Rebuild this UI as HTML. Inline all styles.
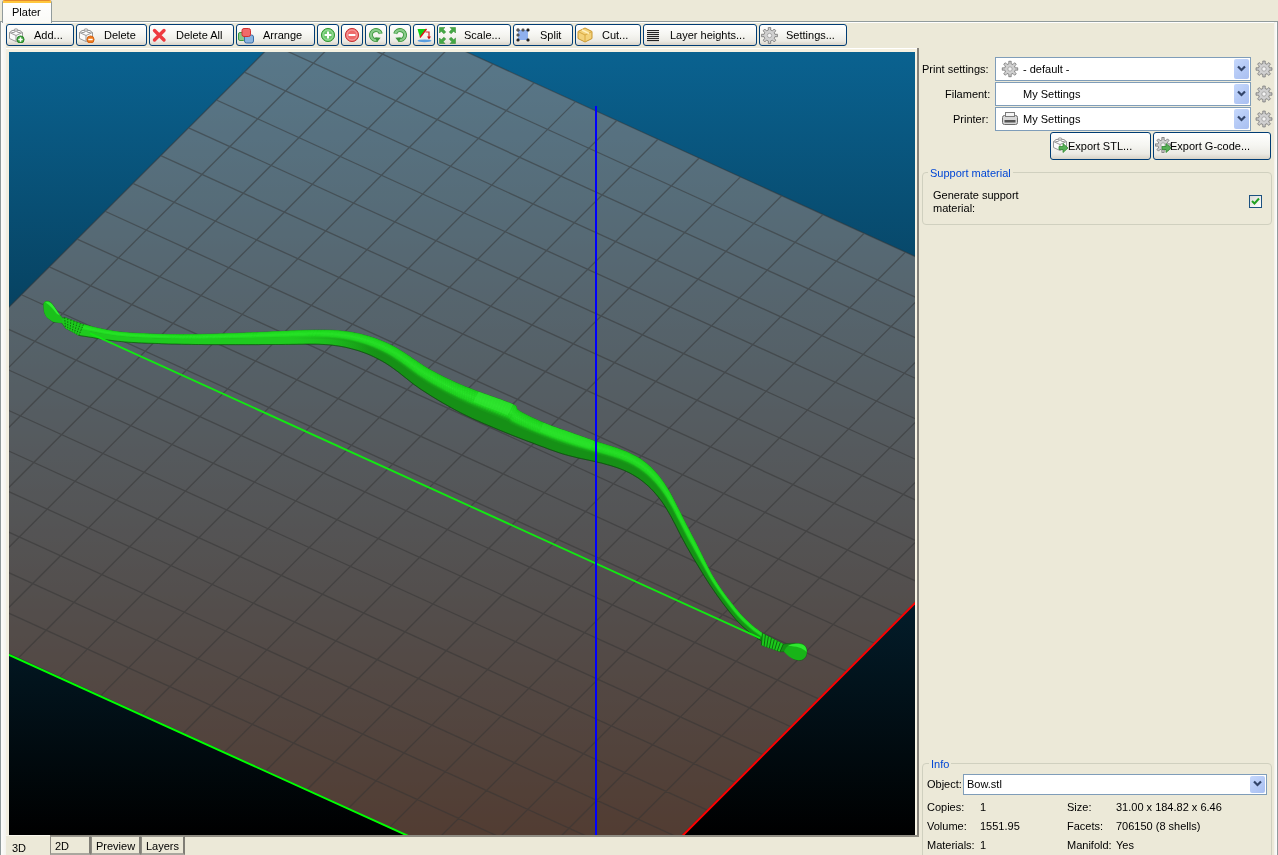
<!DOCTYPE html><html><head><meta charset="utf-8"><style>
*{box-sizing:border-box}
html,body{margin:0;padding:0}
body{width:1278px;height:855px;overflow:hidden;position:relative;background:#ECE9D8;font-family:"Liberation Sans",sans-serif;font-size:11px;color:#000}
.a{position:absolute}
.t{position:absolute;white-space:nowrap;line-height:1;will-change:transform}
.vp{position:absolute;left:9px;top:52px;display:block}
.btn{position:absolute;top:24px;height:22px;border:1px solid #003C74;border-radius:3px;background:linear-gradient(#FFFFFF 0%,#F6F6F2 45%,#ECEBE5 80%,#D8D3C8 100%)}
.btn svg{position:absolute}
.cmb{position:absolute;height:24px;border:1px solid #7F9DB9;background:#fff}
.dd{position:absolute;width:15px;border-radius:2px;background:linear-gradient(135deg,#C6D8FC,#B3C8F5 60%,#A9BFF1)}
.gb{position:absolute;border:1px solid #D0D0BF;border-radius:4px}
.gt{position:absolute;color:#0046D5;background:#ECE9D8;padding:0 2px;white-space:nowrap;line-height:1;will-change:transform}
.tab2{position:absolute;top:836px;height:19px;border:1px solid #8E8C83;border-top-color:#9A988F;border-right:2px solid #807E76;border-bottom:2px solid #A9A79E;background:#ECE9D8}
</style></head><body>
<div class="a" style="left:0;top:21px;width:1278px;height:1px;background:#919B9C"></div>
<div class="a" style="left:1px;top:22px;width:1276px;height:1px;background:#FFFFFF"></div>
<div class="a" style="left:0;top:21px;width:1px;height:834px;background:#919B9C"></div>
<div class="a" style="left:1px;top:22px;width:5px;height:833px;background:linear-gradient(90deg,#FDFDFB,#F4F3EE)"></div>
<div class="a" style="left:1277px;top:21px;width:1px;height:834px;background:#919B9C"></div>
<div class="a" style="left:1274px;top:22px;width:3px;height:833px;background:linear-gradient(90deg,#F1F0E8,#FFFFFF)"></div>
<div class="a" style="left:2px;top:0;width:50px;height:23px;background:linear-gradient(#FFFFFF,#FAFAF7);border-left:1px solid #919B9C;border-right:1px solid #919B9C;border-top:1px solid #E68B2C;border-radius:3px 3px 0 0"></div>
<div class="a" style="left:3px;top:1px;width:48px;height:2px;background:#FFC73C"></div>
<div class="t" style="left:12px;top:7px;">Plater</div>
<div class="a" style="left:6px;top:48px;width:912px;height:1px;background:#FFFFFF"></div>
<div class="a" style="left:6px;top:49px;width:911px;height:3px;background:#F5F1E1"></div>
<div class="a" style="left:6px;top:49px;width:3px;height:786px;background:#F1EEE0"></div>
<div class="a" style="left:915px;top:49px;width:2px;height:787px;background:#F8F4E4"></div>
<div class="a" style="left:917px;top:48px;width:2px;height:789px;background:#85827A"></div>
<div class="a" style="left:50px;top:835px;width:869px;height:2px;background:#8F8C82"></div>
<div class="a" style="left:6px;top:835px;width:44px;height:1px;background:#F8F6EC"></div>
<svg class="vp" width="906" height="783" viewBox="9 52 906 783">
<defs>
<linearGradient id="bg" x1="0" y1="52" x2="0" y2="835" gradientUnits="userSpaceOnUse">
<stop offset="0" stop-color="rgb(10,98,144)"/><stop offset="1" stop-color="rgb(0,0,0)"/>
</linearGradient>
</defs>
<rect x="9" y="52" width="906" height="783" fill="url(#bg)"/>
<polygon points="595.81,921.47 1152.93,365.05 327.88,-11.31 -229.24,545.11" fill="rgb(204,153,128)" fill-opacity="0.4"/>
<path d="M595.81 921.47L-229.24 545.11M595.81 921.47L1152.93 365.05M623.67 893.65L-201.39 517.29M554.56 902.65L1111.68 346.23M651.52 865.83L-173.53 489.47M513.30 883.83L1070.43 327.42M679.38 838.01L-145.67 461.65M472.05 865.02L1029.17 308.60M707.23 810.19L-117.82 433.83M430.80 846.20L987.92 289.78M735.09 782.37L-89.96 406.01M389.55 827.38L946.67 270.96M762.95 754.54L-62.11 378.19M348.29 808.56L905.42 252.14M790.80 726.72L-34.25 350.37M307.04 789.74L864.16 233.33M818.66 698.90L-6.39 322.54M265.79 770.93L822.91 214.51M846.51 671.08L21.46 294.72M224.54 752.11L781.66 195.69M874.37 643.26L49.32 266.90M183.28 733.29L740.41 176.87M902.23 615.44L77.18 239.08M142.03 714.47L699.15 158.06M930.08 587.62L105.03 211.26M100.78 695.66L657.90 139.24M957.94 559.80L132.89 183.44M59.53 676.84L616.65 120.42M985.80 531.98L160.74 155.62M18.27 658.02L575.40 101.60M1013.65 504.16L188.60 127.80M-22.98 639.20L534.14 82.78M1041.51 476.34L216.46 99.98M-64.23 620.38L492.89 63.97M1069.36 448.51L244.31 72.16M-105.48 601.57L451.64 45.15M1097.22 420.69L272.17 44.34M-146.74 582.75L410.39 26.33M1125.08 392.87L300.02 16.51M-187.99 563.93L369.13 7.51M1152.93 365.05L327.88 -11.31M-229.24 545.11L327.88 -11.31" stroke="rgb(51,51,51)" stroke-opacity="0.5" stroke-width="1.3" fill="none"/>
<line x1="596.77" y1="921.43" x2="1596.77" y2="-78.57" stroke="#ff0000" stroke-width="2"/>
<line x1="596.77" y1="921.43" x2="-903.23" y2="241.33" stroke="#00ff00" stroke-width="2"/>
<g>
<defs><linearGradient id="dk" gradientUnits="userSpaceOnUse" x1="280" y1="0" x2="380" y2="0"><stop offset="0" stop-color="#1DC41D"/><stop offset="1" stop-color="#169016"/></linearGradient></defs>
<polygon points="43.6,307.0 43.6,303.3 45.5,301.4 49.0,301.2 52.0,303.5 56.0,309.5 60.0,315.5 62.5,318.0 64.7,317.4 83.5,324.4 93.2,327.0 94.9,327.4 96.5,327.8 98.2,328.2 99.8,328.5 103.1,329.2 106.4,329.9 109.7,330.5 113.0,331.0 116.3,331.5 119.7,331.9 123.0,332.3 126.4,332.6 129.7,332.9 133.1,333.1 136.4,333.3 139.8,333.4 143.2,333.6 146.5,333.7 149.9,333.9 153.2,334.0 156.6,334.1 160.0,334.2 163.3,334.3 166.7,334.4 170.1,334.5 173.4,334.5 176.8,334.6 180.2,334.6 183.5,334.6 186.9,334.6 190.3,334.5 193.6,334.5 197.0,334.4 200.4,334.4 203.7,334.3 207.1,334.2 210.5,334.1 213.8,334.0 217.2,333.9 220.6,333.8 223.9,333.7 227.3,333.6 230.6,333.5 234.0,333.4 237.4,333.2 240.7,333.1 244.1,333.0 247.5,332.8 250.8,332.7 254.2,332.6 257.6,332.4 260.9,332.3 264.3,332.1 267.6,332.0 271.0,331.8 274.4,331.6 277.7,331.5 281.1,331.3 284.5,331.1 287.8,331.0 291.2,330.8 294.5,330.7 297.9,330.5 301.3,330.4 304.6,330.3 308.0,330.2 311.4,330.1 314.7,330.0 318.1,330.0 321.5,330.0 324.8,330.0 328.2,330.1 331.5,330.2 334.9,330.4 338.3,330.6 341.6,331.0 344.9,331.4 348.3,331.8 351.6,332.3 354.9,332.9 358.2,333.6 361.5,334.3 364.7,335.2 367.9,336.1 371.1,337.1 374.3,338.1 377.5,339.3 380.6,340.5 383.7,341.7 386.8,343.1 389.8,344.5 392.8,346.0 395.7,347.6 398.6,349.3 401.4,351.1 404.3,352.8 407.1,354.7 409.9,356.5 412.6,358.4 415.4,360.3 418.2,362.2 421.0,364.1 423.8,365.9 426.6,367.7 429.5,369.4 432.5,371.0 435.4,372.6 438.4,374.2 441.4,375.7 444.4,377.2 447.5,378.7 450.5,380.1 453.5,381.5 456.6,382.9 459.7,384.3 462.8,385.6 465.9,386.9 469.0,388.1 472.2,389.3 475.3,390.5 478.5,391.7 481.6,392.8 484.8,393.9 488.0,395.0 491.1,396.2 494.3,397.3 497.5,398.4 500.7,399.5 503.8,400.7 507.0,401.9 510.1,403.1 513.2,404.5 516.1,406.1 516.8,409.0 519.5,411.0 522.4,412.7 525.4,414.3 528.4,415.8 531.4,417.3 534.5,418.7 537.5,420.1 540.6,421.5 543.7,422.7 546.8,424.0 549.9,425.2 553.0,426.4 556.2,427.6 559.3,428.7 562.5,429.8 565.7,430.8 568.9,431.9 572.1,433.1 575.2,434.2 578.4,435.3 581.6,436.5 584.7,437.6 587.9,438.7 591.1,439.8 594.3,440.9 597.5,441.9 600.7,443.0 603.9,444.0 607.1,445.0 610.3,446.0 613.5,447.1 616.7,448.1 619.9,449.2 623.0,450.4 626.1,451.6 629.2,452.9 632.2,454.4 635.2,455.9 638.1,457.6 640.9,459.3 643.6,461.2 646.3,463.2 648.8,465.4 651.3,467.6 653.6,470.0 655.9,472.5 658.1,475.0 660.1,477.6 662.1,480.3 664.1,483.1 665.9,485.9 667.7,488.7 669.4,491.6 671.0,494.5 672.6,497.5 674.1,500.5 675.6,503.5 677.1,506.5 678.7,509.5 680.2,512.5 681.7,515.5 683.2,518.5 684.7,521.5 686.2,524.5 687.8,527.5 689.4,530.5 690.9,533.4 692.5,536.4 694.1,539.4 695.6,542.4 697.1,545.4 698.6,548.4 700.1,551.4 701.6,554.4 703.1,557.5 704.6,560.5 706.0,563.5 707.5,566.5 709.1,569.5 710.6,572.5 712.3,575.4 714.0,578.3 715.7,581.1 717.5,583.9 719.4,586.7 721.3,589.5 723.2,592.3 725.2,595.0 727.2,597.7 729.3,600.3 731.3,603.0 733.4,605.6 735.5,608.2 737.6,610.8 739.8,613.4 742.1,615.8 744.4,618.2 746.8,620.5 749.3,622.8 750.5,624.0 751.7,625.1 753.0,626.2 754.3,627.3 762.4,633.3 762.4,633.3 783.3,644.1 788.8,643.5 795.0,643.2 802.5,644.1 805.8,646.8 806.9,650.7 806.0,656.5 803.0,659.8 799.8,660.5 794.3,659.4 788.8,655.6 784.4,651.8 780.0,651.8 761.4,645.2 761.4,640.8 753.0,635.3 751.7,634.3 750.4,633.2 749.1,632.2 747.9,631.1 745.4,628.9 742.9,626.7 740.5,624.4 738.2,622.0 735.9,619.6 733.8,617.1 731.6,614.5 729.5,611.9 727.5,609.3 725.4,606.6 723.4,604.0 721.4,601.3 719.5,598.6 717.5,595.9 715.6,593.2 713.7,590.4 711.8,587.7 709.9,584.9 708.1,582.1 706.3,579.3 704.5,576.5 702.8,573.6 701.0,570.8 699.3,567.9 697.6,565.1 695.8,562.2 694.1,559.3 692.4,556.5 690.7,553.6 689.1,550.7 687.4,547.8 685.8,544.9 684.2,541.9 682.6,539.0 681.0,536.0 679.5,533.1 678.0,530.1 676.5,527.1 675.0,524.1 673.4,521.2 671.9,518.2 670.3,515.3 668.6,512.4 666.9,509.5 665.2,506.7 663.4,503.9 661.5,501.2 659.5,498.5 657.4,495.9 655.3,493.4 653.1,490.9 650.8,488.5 648.4,486.2 645.9,484.0 643.4,481.9 640.7,479.8 638.0,477.9 635.2,476.2 632.4,474.5 629.5,472.9 626.5,471.5 623.4,470.1 620.4,468.9 617.2,467.7 614.1,466.7 610.9,465.7 607.7,464.8 604.5,463.9 601.3,463.0 598.0,462.3 594.8,461.5 591.5,460.8 588.2,460.1 585.0,459.4 581.7,458.7 578.4,458.0 575.2,457.2 572.0,456.4 568.7,455.6 565.5,454.7 562.3,453.8 559.2,452.8 556.0,451.7 552.9,450.6 549.7,449.5 546.6,448.3 543.5,447.1 540.3,446.0 537.2,444.8 534.1,443.6 531.0,442.4 527.8,441.3 524.7,440.1 521.6,438.9 518.5,437.7 515.4,436.5 512.2,435.3 509.1,434.0 506.0,432.8 502.9,431.5 499.8,430.3 496.8,429.0 493.7,427.7 490.6,426.4 487.5,425.1 484.4,423.8 481.4,422.5 478.3,421.1 475.3,419.8 472.2,418.4 469.2,417.0 466.2,415.5 463.2,414.1 460.2,412.6 457.3,411.0 454.3,409.4 451.4,407.8 448.5,406.2 445.6,404.5 442.7,402.9 439.8,401.2 437.0,399.5 434.1,397.7 431.2,396.0 428.4,394.2 425.6,392.4 422.8,390.6 420.0,388.8 417.3,386.8 414.6,384.9 411.9,382.9 409.3,380.8 406.7,378.7 404.1,376.7 401.5,374.6 398.9,372.5 396.2,370.5 393.6,368.6 390.8,366.6 388.1,364.8 385.3,363.0 382.4,361.3 379.5,359.7 376.6,358.2 373.6,356.7 370.5,355.3 367.5,354.0 364.4,352.8 361.3,351.7 358.1,350.6 354.9,349.7 351.7,348.8 348.5,348.0 345.2,347.2 341.9,346.6 338.7,346.0 335.4,345.6 332.1,345.1 328.7,344.8 325.4,344.6 322.1,344.4 318.8,344.2 315.4,344.1 312.1,344.1 308.8,344.1 305.4,344.1 302.1,344.2 298.7,344.2 295.4,344.3 292.1,344.3 288.7,344.4 285.4,344.4 282.0,344.5 278.7,344.5 275.3,344.5 272.0,344.5 268.7,344.5 265.3,344.5 262.0,344.5 258.6,344.6 255.3,344.6 252.0,344.6 248.6,344.6 245.3,344.6 241.9,344.6 238.6,344.6 235.3,344.6 231.9,344.6 228.6,344.6 225.2,344.6 221.9,344.6 218.6,344.6 215.2,344.6 211.9,344.6 208.5,344.6 205.2,344.6 201.9,344.5 198.5,344.5 195.2,344.5 191.8,344.4 188.5,344.3 185.1,344.3 181.8,344.2 178.5,344.1 175.1,344.0 171.8,344.0 168.5,343.9 165.1,343.8 161.8,343.7 158.4,343.5 155.1,343.4 151.8,343.3 148.4,343.2 145.1,343.1 141.7,342.9 138.4,342.8 135.1,342.6 131.7,342.4 128.4,342.2 125.1,341.9 121.8,341.6 118.4,341.3 115.1,340.9 111.8,340.5 108.5,340.0 105.2,339.6 101.9,339.1 98.6,338.5 95.3,338.0 93.7,337.7 92.0,337.4 90.4,337.2 88.7,336.9 78.8,335.4 65.5,328.3 61.6,322.9 53.0,322.1 47.0,317.5 44.5,313.0" fill="url(#dk)" stroke="#0B4A0B" stroke-width="0.7" stroke-opacity="0.55"/>
<polygon points="83.5,324.4 93.2,327.0 94.9,327.4 96.5,327.8 98.2,328.2 99.8,328.5 103.1,329.2 106.4,329.9 109.7,330.5 113.0,331.0 116.3,331.5 119.7,331.9 123.0,332.3 126.4,332.6 129.7,332.9 133.1,333.1 136.4,333.3 139.8,333.4 143.2,333.6 146.5,333.7 149.9,333.9 153.2,334.0 156.6,334.1 160.0,334.2 163.3,334.3 166.7,334.4 170.1,334.5 173.4,334.5 176.8,334.6 180.2,334.6 183.5,334.6 186.9,334.6 190.3,334.5 193.6,334.5 197.0,334.4 200.4,334.4 203.7,334.3 207.1,334.2 210.5,334.1 213.8,334.0 217.2,333.9 220.6,333.8 223.9,333.7 227.3,333.6 230.6,333.5 234.0,333.4 237.4,333.2 240.7,333.1 244.1,333.0 247.5,332.8 250.8,332.7 254.2,332.6 257.6,332.4 260.9,332.3 264.3,332.1 267.6,332.0 271.0,331.8 274.4,331.6 277.7,331.5 281.1,331.3 284.5,331.1 287.8,331.0 291.2,330.8 294.5,330.7 297.9,330.5 301.3,330.4 304.6,330.3 308.0,330.2 311.4,330.1 314.7,330.0 318.1,330.0 321.5,330.0 324.8,330.0 328.2,330.1 331.5,330.2 334.9,330.4 338.3,330.6 341.6,331.0 344.9,331.4 348.3,331.8 351.6,332.3 354.9,332.9 358.2,333.6 361.5,334.3 364.7,335.2 367.9,336.1 371.1,337.1 374.3,338.1 377.5,339.3 380.6,340.5 383.7,341.7 386.8,343.1 389.8,344.5 392.8,346.0 395.7,347.6 398.6,349.3 401.4,351.1 404.3,352.8 407.1,354.7 409.9,356.5 412.6,358.4 415.4,360.3 418.2,362.2 421.0,364.1 423.8,365.9 426.6,367.7 429.5,369.4 432.5,371.0 435.4,372.6 438.4,374.2 441.4,375.7 444.4,377.2 447.5,378.7 450.5,380.1 453.5,381.5 456.6,382.9 459.7,384.3 462.8,385.6 465.9,386.9 469.0,388.1 472.2,389.3 475.3,390.5 478.5,391.7 481.6,392.8 484.8,393.9 488.0,395.0 491.1,396.2 494.3,397.3 497.5,398.4 500.7,399.5 503.8,400.7 507.0,401.9 510.1,403.1 513.2,404.5 516.1,406.1 516.8,409.0 519.5,411.0 522.4,412.7 525.4,414.3 528.4,415.8 531.4,417.3 534.5,418.7 537.5,420.1 540.6,421.5 543.7,422.7 546.8,424.0 549.9,425.2 553.0,426.4 556.2,427.6 559.3,428.7 562.5,429.8 565.7,430.8 568.9,431.9 572.1,433.1 575.2,434.2 578.4,435.3 581.6,436.5 584.7,437.6 587.9,438.7 591.1,439.8 594.3,440.9 597.5,441.9 600.7,443.0 603.9,444.0 607.1,445.0 610.3,446.0 613.5,447.1 616.7,448.1 619.9,449.2 623.0,450.4 626.1,451.6 629.2,452.9 632.2,454.4 635.2,455.9 638.1,457.6 640.9,459.3 643.6,461.2 646.3,463.2 648.8,465.4 651.3,467.6 653.6,470.0 655.9,472.5 658.1,475.0 660.1,477.6 662.1,480.3 664.1,483.1 665.9,485.9 667.7,488.7 669.4,491.6 671.0,494.5 672.6,497.5 674.1,500.5 675.6,503.5 677.1,506.5 678.7,509.5 680.2,512.5 681.7,515.5 683.2,518.5 684.7,521.5 686.2,524.5 687.8,527.5 689.4,530.5 690.9,533.4 692.5,536.4 694.1,539.4 695.6,542.4 697.1,545.4 698.6,548.4 700.1,551.4 701.6,554.4 703.1,557.5 704.6,560.5 706.0,563.5 707.5,566.5 709.1,569.5 710.6,572.5 712.3,575.4 714.0,578.3 715.7,581.1 717.5,583.9 719.4,586.7 721.3,589.5 723.2,592.3 725.2,595.0 727.2,597.7 729.3,600.3 731.3,603.0 733.4,605.6 735.5,608.2 737.6,610.8 739.8,613.4 742.1,615.8 744.4,618.2 746.8,620.5 749.3,622.8 750.5,624.0 751.7,625.1 753.0,626.2 754.3,627.3 762.4,633.3 762.4,633.6 754.2,627.6 752.9,626.5 751.7,625.4 750.4,624.3 749.2,623.1 746.8,620.9 744.4,618.5 742.0,616.2 739.7,613.7 737.6,611.2 735.4,608.6 733.3,605.9 731.3,603.3 729.2,600.6 727.1,598.0 725.1,595.3 723.1,592.6 721.2,589.9 719.3,587.1 717.5,584.3 715.7,581.5 713.9,578.6 712.2,575.8 710.5,572.9 709.0,569.9 707.4,566.9 705.9,563.9 704.4,560.9 702.9,557.9 701.4,554.8 699.9,551.8 698.4,548.8 696.9,545.8 695.4,542.8 693.9,539.8 692.3,536.8 690.7,533.9 689.2,530.9 687.6,527.9 686.0,524.9 684.5,521.9 683.0,518.9 681.5,515.9 680.0,512.9 678.5,509.9 676.9,506.9 675.4,503.9 673.9,500.9 672.4,498.0 670.8,495.0 669.2,492.1 667.5,489.2 665.7,486.3 663.8,483.5 661.9,480.8 659.9,478.1 657.8,475.5 655.6,473.0 653.4,470.5 651.0,468.2 648.5,465.9 646.0,463.8 643.3,461.8 640.6,459.9 637.7,458.1 634.9,456.5 631.9,455.0 628.9,453.5 625.8,452.2 622.7,451.0 619.5,449.9 616.4,448.8 613.2,447.7 610.0,446.7 606.8,445.7 603.6,444.6 600.3,443.6 597.1,442.6 593.9,441.6 590.7,440.5 587.6,439.4 584.4,438.3 581.2,437.2 578.0,436.1 574.9,435.0 571.7,433.8 568.5,432.7 565.3,431.6 562.2,430.6 559.0,429.5 555.8,428.4 552.7,427.2 549.5,426.0 546.4,424.8 543.3,423.5 540.2,422.2 537.1,420.9 534.1,419.5 531.0,418.1 528.0,416.6 525.0,415.1 522.0,413.6 519.1,411.9 516.4,409.9 515.6,407.0 512.7,405.4 509.6,404.1 506.5,402.9 503.3,401.6 500.2,400.4 497.0,399.4 493.8,398.2 490.7,397.1 487.5,396.0 484.3,394.8 481.2,393.7 478.0,392.6 474.8,391.4 471.7,390.2 468.6,389.0 465.5,387.7 462.4,386.4 459.3,385.1 456.2,383.7 453.1,382.3 450.1,380.9 447.1,379.4 444.0,377.9 441.0,376.4 438.0,374.9 435.1,373.3 432.1,371.7 429.2,370.1 426.3,368.4 423.4,366.6 420.6,364.8 417.8,362.9 415.1,361.0 412.3,359.1 409.5,357.2 406.8,355.3 404.0,353.5 401.1,351.7 398.3,350.0 395.4,348.3 392.5,346.7 389.5,345.1 386.5,343.7 383.5,342.3 380.3,341.1 377.2,339.9 374.1,338.7 370.9,337.7 367.7,336.7 364.5,335.8 361.2,334.9 357.9,334.2 354.6,333.5 351.3,332.9 348.0,332.4 344.7,331.9 341.4,331.5 338.0,331.2 334.7,330.9 331.3,330.7 328.0,330.6 324.6,330.5 321.2,330.5 317.9,330.5 314.5,330.5 311.1,330.6 307.8,330.7 304.4,330.8 301.1,330.9 297.7,331.0 294.3,331.2 291.0,331.3 287.6,331.5 284.2,331.6 280.9,331.8 277.5,331.9 274.2,332.1 270.8,332.3 267.4,332.4 264.1,332.6 260.7,332.7 257.3,332.9 254.0,333.0 250.6,333.2 247.3,333.3 243.9,333.4 240.5,333.5 237.2,333.7 233.8,333.8 230.4,333.9 227.1,334.0 223.7,334.1 220.4,334.2 217.0,334.3 213.6,334.4 210.3,334.5 206.9,334.6 203.5,334.7 200.2,334.8 196.8,334.8 193.4,334.9 190.1,334.9 186.7,334.9 183.3,335.0 180.0,335.0 176.6,334.9 173.2,334.9 169.9,334.8 166.5,334.8 163.2,334.7 159.8,334.6 156.4,334.5 153.1,334.3 149.7,334.2 146.3,334.1 143.0,333.9 139.6,333.8 136.3,333.6 132.9,333.4 129.5,333.2 126.2,332.9 122.8,332.6 119.5,332.3 116.2,331.8 112.8,331.4 109.5,330.8 106.2,330.2 102.9,329.6 99.6,328.9 98.0,328.5 96.4,328.2 94.7,327.8 93.1,327.4 83.3,324.8" fill="#1DCC1D" stroke="#1DCC1D" stroke-width="0.35"/>
<polygon points="83.3,324.8 93.1,327.4 94.7,327.8 96.4,328.2 98.0,328.5 99.6,328.9 102.9,329.6 106.2,330.2 109.5,330.8 112.8,331.4 116.2,331.8 119.5,332.3 122.8,332.6 126.2,332.9 129.5,333.2 132.9,333.4 136.3,333.6 139.6,333.8 143.0,333.9 146.3,334.1 149.7,334.2 153.1,334.3 156.4,334.5 159.8,334.6 163.2,334.7 166.5,334.8 169.9,334.8 173.2,334.9 176.6,334.9 180.0,335.0 183.3,335.0 186.7,334.9 190.1,334.9 193.4,334.9 196.8,334.8 200.2,334.8 203.5,334.7 206.9,334.6 210.3,334.5 213.6,334.4 217.0,334.3 220.4,334.2 223.7,334.1 227.1,334.0 230.4,333.9 233.8,333.8 237.2,333.7 240.5,333.5 243.9,333.4 247.3,333.3 250.6,333.2 254.0,333.0 257.3,332.9 260.7,332.7 264.1,332.6 267.4,332.4 270.8,332.3 274.2,332.1 277.5,331.9 280.9,331.8 284.2,331.6 287.6,331.5 291.0,331.3 294.3,331.2 297.7,331.0 301.1,330.9 304.4,330.8 307.8,330.7 311.1,330.6 314.5,330.5 317.9,330.5 321.2,330.5 324.6,330.5 328.0,330.6 331.3,330.7 334.7,330.9 338.0,331.2 341.4,331.5 344.7,331.9 348.0,332.4 351.3,332.9 354.6,333.5 357.9,334.2 361.2,334.9 364.5,335.8 367.7,336.7 370.9,337.7 374.1,338.7 377.2,339.9 380.3,341.1 383.5,342.3 386.5,343.7 389.5,345.1 392.5,346.7 395.4,348.3 398.3,350.0 401.1,351.7 404.0,353.5 406.8,355.3 409.5,357.2 412.3,359.1 415.1,361.0 417.8,362.9 420.6,364.8 423.4,366.6 426.3,368.4 429.2,370.1 432.1,371.7 435.1,373.3 438.0,374.9 441.0,376.4 444.0,377.9 447.1,379.4 450.1,380.9 453.1,382.3 456.2,383.7 459.3,385.1 462.4,386.4 465.5,387.7 468.6,389.0 471.7,390.2 474.8,391.4 478.0,392.6 481.2,393.7 484.3,394.8 487.5,396.0 490.7,397.1 493.8,398.2 497.0,399.4 500.2,400.4 503.3,401.6 506.5,402.9 509.6,404.1 512.7,405.4 515.6,407.0 516.4,409.9 519.1,411.9 522.0,413.6 525.0,415.1 528.0,416.6 531.0,418.1 534.1,419.5 537.1,420.9 540.2,422.2 543.3,423.5 546.4,424.8 549.5,426.0 552.7,427.2 555.8,428.4 559.0,429.5 562.2,430.6 565.3,431.6 568.5,432.7 571.7,433.8 574.9,435.0 578.0,436.1 581.2,437.2 584.4,438.3 587.6,439.4 590.7,440.5 593.9,441.6 597.1,442.6 600.3,443.6 603.6,444.6 606.8,445.7 610.0,446.7 613.2,447.7 616.4,448.8 619.5,449.9 622.7,451.0 625.8,452.2 628.9,453.5 631.9,455.0 634.9,456.5 637.7,458.1 640.6,459.9 643.3,461.8 646.0,463.8 648.5,465.9 651.0,468.2 653.4,470.5 655.6,473.0 657.8,475.5 659.9,478.1 661.9,480.8 663.8,483.5 665.7,486.3 667.5,489.2 669.2,492.1 670.8,495.0 672.4,498.0 673.9,500.9 675.4,503.9 676.9,506.9 678.5,509.9 680.0,512.9 681.5,515.9 683.0,518.9 684.5,521.9 686.0,524.9 687.6,527.9 689.2,530.9 690.7,533.9 692.3,536.8 693.9,539.8 695.4,542.8 696.9,545.8 698.4,548.8 699.9,551.8 701.4,554.8 702.9,557.9 704.4,560.9 705.9,563.9 707.4,566.9 709.0,569.9 710.5,572.9 712.2,575.8 713.9,578.6 715.7,581.5 717.5,584.3 719.3,587.1 721.2,589.9 723.1,592.6 725.1,595.3 727.1,598.0 729.2,600.6 731.3,603.3 733.3,605.9 735.4,608.6 737.6,611.2 739.7,613.7 742.0,616.2 744.4,618.5 746.8,620.9 749.2,623.1 750.4,624.3 751.7,625.4 752.9,626.5 754.2,627.6 762.4,633.6 762.3,633.9 754.2,627.9 752.9,626.8 751.6,625.7 750.4,624.6 749.2,623.4 746.7,621.2 744.3,618.9 742.0,616.5 739.7,614.0 737.5,611.5 735.4,608.9 733.3,606.3 731.2,603.6 729.1,601.0 727.1,598.3 725.0,595.6 723.1,592.9 721.1,590.2 719.2,587.4 717.4,584.6 715.6,581.8 713.8,579.0 712.1,576.1 710.4,573.2 708.8,570.3 707.3,567.3 705.8,564.3 704.3,561.3 702.8,558.2 701.3,555.2 699.8,552.2 698.3,549.2 696.8,546.2 695.2,543.2 693.7,540.2 692.1,537.3 690.5,534.3 689.0,531.3 687.4,528.4 685.9,525.4 684.3,522.4 682.8,519.4 681.3,516.4 679.8,513.4 678.3,510.4 676.7,507.4 675.2,504.4 673.7,501.4 672.2,498.4 670.6,495.4 668.9,492.5 667.2,489.6 665.4,486.8 663.6,484.0 661.6,481.3 659.6,478.6 657.5,476.0 655.3,473.5 653.1,471.0 650.7,468.7 648.2,466.5 645.7,464.3 643.0,462.3 640.3,460.5 637.4,458.7 634.5,457.1 631.6,455.5 628.6,454.1 625.5,452.8 622.4,451.6 619.2,450.5 616.0,449.4 612.8,448.3 609.6,447.3 606.4,446.3 603.2,445.3 600.0,444.3 596.8,443.3 593.6,442.3 590.4,441.2 587.2,440.1 584.0,439.1 580.8,438.0 577.7,436.8 574.5,435.7 571.3,434.6 568.2,433.5 565.0,432.4 561.8,431.3 558.6,430.3 555.4,429.1 552.3,428.0 549.2,426.8 546.0,425.6 542.9,424.3 539.8,423.0 536.8,421.7 533.7,420.3 530.7,418.9 527.7,417.4 524.6,415.9 521.6,414.4 518.7,412.8 516.0,410.8 515.2,408.0 512.2,406.4 509.1,405.1 506.0,403.8 502.8,402.6 499.7,401.4 496.5,400.3 493.3,399.2 490.2,398.0 487.0,396.9 483.9,395.8 480.7,394.6 477.5,393.5 474.4,392.3 471.3,391.1 468.1,389.8 465.0,388.6 461.9,387.2 458.8,385.9 455.8,384.5 452.7,383.1 449.7,381.7 446.7,380.2 443.7,378.7 440.7,377.2 437.7,375.7 434.7,374.1 431.8,372.5 428.8,370.8 425.9,369.1 423.1,367.3 420.3,365.5 417.5,363.6 414.7,361.7 412.0,359.8 409.2,357.9 406.5,356.0 403.7,354.2 400.9,352.4 398.0,350.6 395.1,348.9 392.2,347.3 389.3,345.8 386.2,344.3 383.2,343.0 380.1,341.7 377.0,340.5 373.8,339.3 370.6,338.3 367.4,337.3 364.2,336.3 361.0,335.5 357.7,334.7 354.4,334.1 351.1,333.5 347.8,332.9 344.5,332.5 341.1,332.1 337.8,331.7 334.4,331.5 331.1,331.3 327.7,331.1 324.4,331.1 321.0,331.0 317.7,331.0 314.3,331.1 310.9,331.1 307.6,331.2 304.2,331.3 300.8,331.4 297.5,331.6 294.1,331.7 290.8,331.8 287.4,332.0 284.0,332.1 280.7,332.3 277.3,332.4 273.9,332.6 270.6,332.7 267.2,332.9 263.9,333.1 260.5,333.2 257.1,333.3 253.8,333.5 250.4,333.6 247.1,333.7 243.7,333.9 240.3,334.0 237.0,334.1 233.6,334.2 230.2,334.3 226.9,334.4 223.5,334.5 220.2,334.6 216.8,334.7 213.4,334.8 210.1,334.9 206.7,335.0 203.3,335.1 200.0,335.1 196.6,335.2 193.2,335.2 189.9,335.3 186.5,335.3 183.2,335.3 179.8,335.3 176.4,335.3 173.1,335.2 169.7,335.2 166.3,335.1 163.0,335.0 159.6,334.9 156.2,334.8 152.9,334.7 149.5,334.6 146.2,334.4 142.8,334.3 139.4,334.1 136.1,334.0 132.7,333.8 129.4,333.6 126.0,333.3 122.7,333.0 119.3,332.6 116.0,332.2 112.7,331.7 109.4,331.2 106.1,330.6 102.8,329.9 99.5,329.2 97.8,328.9 96.2,328.5 94.5,328.1 92.9,327.8 83.1,325.2" fill="#1FD31F" stroke="#1FD31F" stroke-width="0.35"/>
<polygon points="83.1,325.2 92.9,327.8 94.5,328.1 96.2,328.5 97.8,328.9 99.5,329.2 102.8,329.9 106.1,330.6 109.4,331.2 112.7,331.7 116.0,332.2 119.3,332.6 122.7,333.0 126.0,333.3 129.4,333.6 132.7,333.8 136.1,334.0 139.4,334.1 142.8,334.3 146.2,334.4 149.5,334.6 152.9,334.7 156.2,334.8 159.6,334.9 163.0,335.0 166.3,335.1 169.7,335.2 173.1,335.2 176.4,335.3 179.8,335.3 183.2,335.3 186.5,335.3 189.9,335.3 193.2,335.2 196.6,335.2 200.0,335.1 203.3,335.1 206.7,335.0 210.1,334.9 213.4,334.8 216.8,334.7 220.2,334.6 223.5,334.5 226.9,334.4 230.2,334.3 233.6,334.2 237.0,334.1 240.3,334.0 243.7,333.9 247.1,333.7 250.4,333.6 253.8,333.5 257.1,333.3 260.5,333.2 263.9,333.1 267.2,332.9 270.6,332.7 273.9,332.6 277.3,332.4 280.7,332.3 284.0,332.1 287.4,332.0 290.8,331.8 294.1,331.7 297.5,331.6 300.8,331.4 304.2,331.3 307.6,331.2 310.9,331.1 314.3,331.1 317.7,331.0 321.0,331.0 324.4,331.1 327.7,331.1 331.1,331.3 334.4,331.5 337.8,331.7 341.1,332.1 344.5,332.5 347.8,332.9 351.1,333.5 354.4,334.1 357.7,334.7 361.0,335.5 364.2,336.3 367.4,337.3 370.6,338.3 373.8,339.3 377.0,340.5 380.1,341.7 383.2,343.0 386.2,344.3 389.3,345.8 392.2,347.3 395.1,348.9 398.0,350.6 400.9,352.4 403.7,354.2 406.5,356.0 409.2,357.9 412.0,359.8 414.7,361.7 417.5,363.6 420.3,365.5 423.1,367.3 425.9,369.1 428.8,370.8 431.8,372.5 434.7,374.1 437.7,375.7 440.7,377.2 443.7,378.7 446.7,380.2 449.7,381.7 452.7,383.1 455.8,384.5 458.8,385.9 461.9,387.2 465.0,388.6 468.1,389.8 471.3,391.1 474.4,392.3 477.5,393.5 480.7,394.6 483.9,395.8 487.0,396.9 490.2,398.0 493.3,399.2 496.5,400.3 499.7,401.4 502.8,402.6 506.0,403.8 509.1,405.1 512.2,406.4 515.2,408.0 516.0,410.8 518.7,412.8 521.6,414.4 524.6,415.9 527.7,417.4 530.7,418.9 533.7,420.3 536.8,421.7 539.8,423.0 542.9,424.3 546.0,425.6 549.2,426.8 552.3,428.0 555.4,429.1 558.6,430.3 561.8,431.3 565.0,432.4 568.2,433.5 571.3,434.6 574.5,435.7 577.7,436.8 580.8,438.0 584.0,439.1 587.2,440.1 590.4,441.2 593.6,442.3 596.8,443.3 600.0,444.3 603.2,445.3 606.4,446.3 609.6,447.3 612.8,448.3 616.0,449.4 619.2,450.5 622.4,451.6 625.5,452.8 628.6,454.1 631.6,455.5 634.5,457.1 637.4,458.7 640.3,460.5 643.0,462.3 645.7,464.3 648.2,466.5 650.7,468.7 653.1,471.0 655.3,473.5 657.5,476.0 659.6,478.6 661.6,481.3 663.6,484.0 665.4,486.8 667.2,489.6 668.9,492.5 670.6,495.4 672.2,498.4 673.7,501.4 675.2,504.4 676.7,507.4 678.3,510.4 679.8,513.4 681.3,516.4 682.8,519.4 684.3,522.4 685.9,525.4 687.4,528.4 689.0,531.3 690.5,534.3 692.1,537.3 693.7,540.2 695.2,543.2 696.8,546.2 698.3,549.2 699.8,552.2 701.3,555.2 702.8,558.2 704.3,561.3 705.8,564.3 707.3,567.3 708.8,570.3 710.4,573.2 712.1,576.1 713.8,579.0 715.6,581.8 717.4,584.6 719.2,587.4 721.1,590.2 723.1,592.9 725.0,595.6 727.1,598.3 729.1,601.0 731.2,603.6 733.3,606.3 735.4,608.9 737.5,611.5 739.7,614.0 742.0,616.5 744.3,618.9 746.7,621.2 749.2,623.4 750.4,624.6 751.6,625.7 752.9,626.8 754.2,627.9 762.3,633.9 762.3,634.1 754.1,628.2 752.9,627.1 751.6,626.0 750.3,624.9 749.1,623.7 746.7,621.5 744.2,619.2 741.9,616.8 739.6,614.3 737.4,611.8 735.3,609.2 733.2,606.6 731.1,604.0 729.1,601.3 727.0,598.7 725.0,596.0 723.0,593.3 721.1,590.5 719.2,587.8 717.3,585.0 715.5,582.2 713.7,579.4 712.0,576.5 710.3,573.6 708.7,570.6 707.2,567.6 705.7,564.6 704.2,561.6 702.7,558.6 701.1,555.6 699.6,552.6 698.1,549.6 696.6,546.6 695.0,543.7 693.5,540.7 691.9,537.7 690.4,534.7 688.8,531.8 687.2,528.8 685.7,525.8 684.1,522.8 682.6,519.8 681.1,516.8 679.6,513.8 678.1,510.8 676.5,507.8 675.0,504.8 673.5,501.8 672.0,498.9 670.4,495.9 668.7,493.0 667.0,490.1 665.2,487.3 663.3,484.5 661.4,481.8 659.3,479.1 657.2,476.5 655.0,474.0 652.8,471.6 650.4,469.2 647.9,467.0 645.4,464.9 642.7,462.9 639.9,461.0 637.1,459.3 634.2,457.7 631.2,456.1 628.2,454.7 625.1,453.4 622.0,452.2 618.9,451.1 615.7,450.0 612.5,449.0 609.3,447.9 606.1,446.9 602.9,445.9 599.7,445.0 596.4,444.0 593.2,442.9 590.0,441.9 586.9,440.9 583.7,439.8 580.5,438.7 577.3,437.6 574.1,436.5 571.0,435.4 567.8,434.3 564.6,433.2 561.4,432.1 558.3,431.0 555.1,429.9 551.9,428.8 548.8,427.6 545.7,426.3 542.6,425.1 539.5,423.8 536.4,422.5 533.4,421.1 530.3,419.7 527.3,418.2 524.3,416.8 521.3,415.2 518.3,413.6 515.6,411.7 514.7,408.9 511.7,407.4 508.6,406.1 505.5,404.8 502.3,403.6 499.2,402.4 496.0,401.3 492.9,400.1 489.7,399.0 486.5,397.8 483.4,396.7 480.2,395.5 477.1,394.4 473.9,393.2 470.8,391.9 467.7,390.7 464.6,389.4 461.5,388.1 458.4,386.7 455.4,385.3 452.3,383.9 449.3,382.5 446.3,381.0 443.3,379.5 440.3,378.0 437.3,376.4 434.3,374.8 431.4,373.2 428.5,371.5 425.6,369.8 422.8,368.0 419.9,366.2 417.2,364.3 414.4,362.4 411.7,360.5 408.9,358.6 406.1,356.7 403.4,354.8 400.6,353.0 397.7,351.3 394.9,349.6 391.9,347.9 389.0,346.4 386.0,344.9 382.9,343.6 379.8,342.3 376.7,341.1 373.5,339.9 370.4,338.8 367.2,337.8 364.0,336.9 360.7,336.1 357.4,335.3 354.2,334.6 350.9,334.0 347.6,333.5 344.2,333.0 340.9,332.6 337.6,332.3 334.2,332.0 330.9,331.8 327.5,331.7 324.1,331.6 320.8,331.6 317.4,331.6 314.1,331.6 310.7,331.7 307.3,331.7 304.0,331.8 300.6,331.9 297.3,332.1 293.9,332.2 290.5,332.3 287.2,332.5 283.8,332.6 280.5,332.8 277.1,332.9 273.7,333.1 270.4,333.2 267.0,333.4 263.7,333.5 260.3,333.7 256.9,333.8 253.6,333.9 250.2,334.0 246.8,334.2 243.5,334.3 240.1,334.4 236.8,334.5 233.4,334.6 230.0,334.7 226.7,334.8 223.3,334.9 220.0,335.0 216.6,335.1 213.2,335.2 209.9,335.3 206.5,335.4 203.1,335.4 199.8,335.5 196.4,335.6 193.1,335.6 189.7,335.6 186.3,335.7 183.0,335.7 179.6,335.7 176.2,335.6 172.9,335.6 169.5,335.5 166.1,335.5 162.8,335.4 159.4,335.3 156.1,335.1 152.7,335.0 149.3,334.9 146.0,334.8 142.6,334.6 139.3,334.5 135.9,334.3 132.5,334.1 129.2,333.9 125.8,333.6 122.5,333.3 119.2,332.9 115.8,332.5 112.5,332.0 109.2,331.5 105.9,330.9 102.6,330.3 99.3,329.6 97.7,329.2 96.0,328.9 94.4,328.5 92.7,328.1 83.0,325.6" fill="#21DB21" stroke="#21DB21" stroke-width="0.35"/>
<polygon points="83.0,325.6 92.7,328.1 94.4,328.5 96.0,328.9 97.7,329.2 99.3,329.6 102.6,330.3 105.9,330.9 109.2,331.5 112.5,332.0 115.8,332.5 119.2,332.9 122.5,333.3 125.8,333.6 129.2,333.9 132.5,334.1 135.9,334.3 139.3,334.5 142.6,334.6 146.0,334.8 149.3,334.9 152.7,335.0 156.1,335.1 159.4,335.3 162.8,335.4 166.1,335.5 169.5,335.5 172.9,335.6 176.2,335.6 179.6,335.7 183.0,335.7 186.3,335.7 189.7,335.6 193.1,335.6 196.4,335.6 199.8,335.5 203.1,335.4 206.5,335.4 209.9,335.3 213.2,335.2 216.6,335.1 220.0,335.0 223.3,334.9 226.7,334.8 230.0,334.7 233.4,334.6 236.8,334.5 240.1,334.4 243.5,334.3 246.8,334.2 250.2,334.0 253.6,333.9 256.9,333.8 260.3,333.7 263.7,333.5 267.0,333.4 270.4,333.2 273.7,333.1 277.1,332.9 280.5,332.8 283.8,332.6 287.2,332.5 290.5,332.3 293.9,332.2 297.3,332.1 300.6,331.9 304.0,331.8 307.3,331.7 310.7,331.7 314.1,331.6 317.4,331.6 320.8,331.6 324.1,331.6 327.5,331.7 330.9,331.8 334.2,332.0 337.6,332.3 340.9,332.6 344.2,333.0 347.6,333.5 350.9,334.0 354.2,334.6 357.4,335.3 360.7,336.1 364.0,336.9 367.2,337.8 370.4,338.8 373.5,339.9 376.7,341.1 379.8,342.3 382.9,343.6 386.0,344.9 389.0,346.4 391.9,347.9 394.9,349.6 397.7,351.3 400.6,353.0 403.4,354.8 406.1,356.7 408.9,358.6 411.7,360.5 414.4,362.4 417.2,364.3 419.9,366.2 422.8,368.0 425.6,369.8 428.5,371.5 431.4,373.2 434.3,374.8 437.3,376.4 440.3,378.0 443.3,379.5 446.3,381.0 449.3,382.5 452.3,383.9 455.4,385.3 458.4,386.7 461.5,388.1 464.6,389.4 467.7,390.7 470.8,391.9 473.9,393.2 477.1,394.4 480.2,395.5 483.4,396.7 486.5,397.8 489.7,399.0 492.9,400.1 496.0,401.3 499.2,402.4 502.3,403.6 505.5,404.8 508.6,406.1 511.7,407.4 514.7,408.9 515.6,411.7 518.3,413.6 521.3,415.2 524.3,416.8 527.3,418.2 530.3,419.7 533.4,421.1 536.4,422.5 539.5,423.8 542.6,425.1 545.7,426.3 548.8,427.6 551.9,428.8 555.1,429.9 558.3,431.0 561.4,432.1 564.6,433.2 567.8,434.3 571.0,435.4 574.1,436.5 577.3,437.6 580.5,438.7 583.7,439.8 586.9,440.9 590.0,441.9 593.2,442.9 596.4,444.0 599.7,445.0 602.9,445.9 606.1,446.9 609.3,447.9 612.5,449.0 615.7,450.0 618.9,451.1 622.0,452.2 625.1,453.4 628.2,454.7 631.2,456.1 634.2,457.7 637.1,459.3 639.9,461.0 642.7,462.9 645.4,464.9 647.9,467.0 650.4,469.2 652.8,471.6 655.0,474.0 657.2,476.5 659.3,479.1 661.4,481.8 663.3,484.5 665.2,487.3 667.0,490.1 668.7,493.0 670.4,495.9 672.0,498.9 673.5,501.8 675.0,504.8 676.5,507.8 678.1,510.8 679.6,513.8 681.1,516.8 682.6,519.8 684.1,522.8 685.7,525.8 687.2,528.8 688.8,531.8 690.4,534.7 691.9,537.7 693.5,540.7 695.0,543.7 696.6,546.6 698.1,549.6 699.6,552.6 701.1,555.6 702.7,558.6 704.2,561.6 705.7,564.6 707.2,567.6 708.7,570.6 710.3,573.6 712.0,576.5 713.7,579.4 715.5,582.2 717.3,585.0 719.2,587.8 721.1,590.5 723.0,593.3 725.0,596.0 727.0,598.7 729.1,601.3 731.1,604.0 733.2,606.6 735.3,609.2 737.4,611.8 739.6,614.3 741.9,616.8 744.2,619.2 746.7,621.5 749.1,623.7 750.3,624.9 751.6,626.0 752.9,627.1 754.1,628.2 762.3,634.1 762.2,634.4 754.1,628.5 752.8,627.4 751.5,626.3 750.3,625.2 749.1,624.0 746.6,621.8 744.2,619.5 741.8,617.1 739.6,614.7 737.4,612.1 735.2,609.6 733.1,606.9 731.1,604.3 729.0,601.7 726.9,599.0 724.9,596.3 722.9,593.6 721.0,590.9 719.1,588.1 717.2,585.3 715.4,582.5 713.6,579.7 711.9,576.8 710.2,573.9 708.6,571.0 707.1,568.0 705.6,565.0 704.0,562.0 702.5,559.0 701.0,556.0 699.5,553.0 697.9,550.1 696.4,547.1 694.9,544.1 693.3,541.1 691.7,538.1 690.2,535.2 688.6,532.2 687.0,529.2 685.5,526.2 683.9,523.2 682.4,520.2 680.9,517.2 679.4,514.3 677.9,511.3 676.4,508.3 674.8,505.3 673.3,502.3 671.8,499.3 670.2,496.4 668.5,493.4 666.8,490.6 664.9,487.8 663.1,485.0 661.1,482.3 659.1,479.6 657.0,477.0 654.8,474.5 652.5,472.1 650.1,469.8 647.6,467.5 645.0,465.4 642.4,463.5 639.6,461.6 636.8,459.9 633.9,458.2 630.9,456.7 627.9,455.3 624.8,454.0 621.7,452.8 618.5,451.7 615.3,450.6 612.1,449.6 608.9,448.6 605.7,447.6 602.5,446.6 599.3,445.6 596.1,444.6 592.9,443.6 589.7,442.6 586.5,441.6 583.3,440.5 580.1,439.5 576.9,438.4 573.8,437.3 570.6,436.2 567.4,435.1 564.2,434.0 561.1,432.9 557.9,431.8 554.7,430.7 551.6,429.5 548.5,428.3 545.3,427.1 542.2,425.9 539.1,424.6 536.0,423.3 533.0,421.9 529.9,420.5 526.9,419.1 523.9,417.6 520.9,416.1 517.9,414.5 515.2,412.6 514.2,409.9 511.2,408.3 508.1,407.0 505.0,405.8 501.8,404.5 498.7,403.3 495.5,402.2 492.4,401.1 489.2,399.9 486.1,398.8 482.9,397.6 479.8,396.4 476.6,395.3 473.5,394.0 470.4,392.8 467.3,391.5 464.2,390.2 461.1,388.9 458.0,387.6 455.0,386.2 451.9,384.7 448.9,383.3 445.9,381.8 442.9,380.3 439.9,378.7 436.9,377.2 434.0,375.6 431.0,373.9 428.1,372.3 425.2,370.5 422.4,368.7 419.6,366.9 416.8,365.0 414.1,363.1 411.4,361.1 408.6,359.2 405.8,357.4 403.1,355.5 400.3,353.7 397.4,351.9 394.6,350.2 391.7,348.6 388.7,347.0 385.7,345.6 382.6,344.2 379.5,342.9 376.4,341.7 373.3,340.5 370.1,339.4 366.9,338.4 363.7,337.5 360.5,336.6 357.2,335.9 353.9,335.2 350.6,334.6 347.3,334.0 344.0,333.6 340.7,333.2 337.3,332.8 334.0,332.6 330.6,332.4 327.3,332.2 323.9,332.1 320.6,332.1 317.2,332.1 313.8,332.1 310.5,332.2 307.1,332.3 303.8,332.4 300.4,332.5 297.0,332.6 293.7,332.7 290.3,332.8 287.0,333.0 283.6,333.1 280.2,333.3 276.9,333.4 273.5,333.6 270.2,333.7 266.8,333.8 263.4,334.0 260.1,334.1 256.7,334.2 253.4,334.4 250.0,334.5 246.6,334.6 243.3,334.7 239.9,334.8 236.6,334.9 233.2,335.0 229.8,335.1 226.5,335.2 223.1,335.3 219.8,335.4 216.4,335.5 213.0,335.6 209.7,335.7 206.3,335.8 202.9,335.8 199.6,335.9 196.2,335.9 192.9,336.0 189.5,336.0 186.1,336.0 182.8,336.0 179.4,336.0 176.0,336.0 172.7,335.9 169.3,335.9 166.0,335.8 162.6,335.7 159.2,335.6 155.9,335.5 152.5,335.4 149.2,335.2 145.8,335.1 142.4,335.0 139.1,334.8 135.7,334.7 132.4,334.5 129.0,334.2 125.7,334.0 122.3,333.6 119.0,333.3 115.7,332.9 112.3,332.4 109.0,331.9 105.7,331.3 102.4,330.6 99.1,329.9 97.5,329.6 95.8,329.2 94.2,328.9 92.6,328.5 82.8,326.0" fill="#23DE23" stroke="#23DE23" stroke-width="0.35"/>
<polygon points="82.8,326.0 92.6,328.5 94.2,328.9 95.8,329.2 97.5,329.6 99.1,329.9 102.4,330.6 105.7,331.3 109.0,331.9 112.3,332.4 115.7,332.9 119.0,333.3 122.3,333.6 125.7,334.0 129.0,334.2 132.4,334.5 135.7,334.7 139.1,334.8 142.4,335.0 145.8,335.1 149.2,335.2 152.5,335.4 155.9,335.5 159.2,335.6 162.6,335.7 166.0,335.8 169.3,335.9 172.7,335.9 176.0,336.0 179.4,336.0 182.8,336.0 186.1,336.0 189.5,336.0 192.9,336.0 196.2,335.9 199.6,335.9 202.9,335.8 206.3,335.8 209.7,335.7 213.0,335.6 216.4,335.5 219.8,335.4 223.1,335.3 226.5,335.2 229.8,335.1 233.2,335.0 236.6,334.9 239.9,334.8 243.3,334.7 246.6,334.6 250.0,334.5 253.4,334.4 256.7,334.2 260.1,334.1 263.4,334.0 266.8,333.8 270.2,333.7 273.5,333.6 276.9,333.4 280.2,333.3 283.6,333.1 287.0,333.0 290.3,332.8 293.7,332.7 297.0,332.6 300.4,332.5 303.8,332.4 307.1,332.3 310.5,332.2 313.8,332.1 317.2,332.1 320.6,332.1 323.9,332.1 327.3,332.2 330.6,332.4 334.0,332.6 337.3,332.8 340.7,333.2 344.0,333.6 347.3,334.0 350.6,334.6 353.9,335.2 357.2,335.9 360.5,336.6 363.7,337.5 366.9,338.4 370.1,339.4 373.3,340.5 376.4,341.7 379.5,342.9 382.6,344.2 385.7,345.6 388.7,347.0 391.7,348.6 394.6,350.2 397.4,351.9 400.3,353.7 403.1,355.5 405.8,357.4 408.6,359.2 411.4,361.1 414.1,363.1 416.8,365.0 419.6,366.9 422.4,368.7 425.2,370.5 428.1,372.3 431.0,373.9 434.0,375.6 436.9,377.2 439.9,378.7 442.9,380.3 445.9,381.8 448.9,383.3 451.9,384.7 455.0,386.2 458.0,387.6 461.1,388.9 464.2,390.2 467.3,391.5 470.4,392.8 473.5,394.0 476.6,395.3 479.8,396.4 482.9,397.6 486.1,398.8 489.2,399.9 492.4,401.1 495.5,402.2 498.7,403.3 501.8,404.5 505.0,405.8 508.1,407.0 511.2,408.3 514.2,409.9 515.2,412.6 517.9,414.5 520.9,416.1 523.9,417.6 526.9,419.1 529.9,420.5 533.0,421.9 536.0,423.3 539.1,424.6 542.2,425.9 545.3,427.1 548.5,428.3 551.6,429.5 554.7,430.7 557.9,431.8 561.1,432.9 564.2,434.0 567.4,435.1 570.6,436.2 573.8,437.3 576.9,438.4 580.1,439.5 583.3,440.5 586.5,441.6 589.7,442.6 592.9,443.6 596.1,444.6 599.3,445.6 602.5,446.6 605.7,447.6 608.9,448.6 612.1,449.6 615.3,450.6 618.5,451.7 621.7,452.8 624.8,454.0 627.9,455.3 630.9,456.7 633.9,458.2 636.8,459.9 639.6,461.6 642.4,463.5 645.0,465.4 647.6,467.5 650.1,469.8 652.5,472.1 654.8,474.5 657.0,477.0 659.1,479.6 661.1,482.3 663.1,485.0 664.9,487.8 666.8,490.6 668.5,493.4 670.2,496.4 671.8,499.3 673.3,502.3 674.8,505.3 676.4,508.3 677.9,511.3 679.4,514.3 680.9,517.2 682.4,520.2 683.9,523.2 685.5,526.2 687.0,529.2 688.6,532.2 690.2,535.2 691.7,538.1 693.3,541.1 694.9,544.1 696.4,547.1 697.9,550.1 699.5,553.0 701.0,556.0 702.5,559.0 704.0,562.0 705.6,565.0 707.1,568.0 708.6,571.0 710.2,573.9 711.9,576.8 713.6,579.7 715.4,582.5 717.2,585.3 719.1,588.1 721.0,590.9 722.9,593.6 724.9,596.3 726.9,599.0 729.0,601.7 731.1,604.3 733.1,606.9 735.2,609.6 737.4,612.1 739.6,614.7 741.8,617.1 744.2,619.5 746.6,621.8 749.1,624.0 750.3,625.2 751.5,626.3 752.8,627.4 754.1,628.5 762.2,634.4 762.2,634.7 754.1,628.8 752.8,627.7 751.5,626.6 750.2,625.5 749.0,624.3 746.5,622.1 744.1,619.8 741.8,617.4 739.5,615.0 737.3,612.5 735.2,609.9 733.1,607.3 731.0,604.6 728.9,602.0 726.9,599.3 724.8,596.7 722.9,594.0 720.9,591.2 719.0,588.5 717.2,585.7 715.4,582.9 713.6,580.1 711.8,577.2 710.2,574.3 708.5,571.4 707.0,568.4 705.4,565.4 703.9,562.4 702.4,559.4 700.8,556.4 699.3,553.4 697.8,550.5 696.2,547.5 694.7,544.5 693.1,541.5 691.6,538.5 690.0,535.6 688.4,532.6 686.8,529.6 685.3,526.7 683.7,523.7 682.2,520.7 680.7,517.7 679.2,514.7 677.7,511.7 676.2,508.7 674.6,505.7 673.1,502.7 671.5,499.8 669.9,496.8 668.3,493.9 666.5,491.0 664.7,488.2 662.8,485.5 660.8,482.8 658.8,480.1 656.7,477.5 654.5,475.0 652.2,472.6 649.8,470.3 647.3,468.1 644.7,466.0 642.1,464.0 639.3,462.2 636.5,460.4 633.6,458.8 630.6,457.3 627.6,455.9 624.5,454.6 621.3,453.4 618.2,452.3 615.0,451.3 611.8,450.2 608.6,449.2 605.4,448.2 602.2,447.3 599.0,446.3 595.8,445.3 592.5,444.3 589.3,443.3 586.1,442.3 582.9,441.3 579.8,440.2 576.6,439.1 573.4,438.0 570.2,436.9 567.1,435.8 563.9,434.8 560.7,433.7 557.5,432.6 554.4,431.5 551.2,430.3 548.1,429.1 545.0,427.9 541.9,426.7 538.8,425.4 535.7,424.1 532.6,422.7 529.6,421.3 526.5,419.9 523.5,418.4 520.5,416.9 517.5,415.3 514.8,413.5 513.7,410.9 510.7,409.3 507.6,408.0 504.5,406.7 501.3,405.5 498.2,404.3 495.0,403.2 491.9,402.0 488.7,400.8 485.6,399.7 482.4,398.5 479.3,397.3 476.2,396.2 473.0,394.9 469.9,393.7 466.8,392.4 463.7,391.1 460.7,389.8 457.6,388.4 454.5,387.0 451.5,385.5 448.5,384.1 445.5,382.6 442.5,381.0 439.5,379.5 436.5,377.9 433.6,376.3 430.7,374.7 427.8,373.0 424.9,371.3 422.1,369.5 419.3,367.6 416.5,365.7 413.8,363.8 411.0,361.8 408.3,359.9 405.5,358.0 402.8,356.2 400.0,354.3 397.1,352.6 394.3,350.9 391.4,349.2 388.4,347.6 385.4,346.2 382.4,344.8 379.3,343.5 376.2,342.3 373.0,341.1 369.9,340.0 366.7,339.0 363.5,338.1 360.2,337.2 357.0,336.4 353.7,335.7 350.4,335.1 347.1,334.6 343.8,334.1 340.4,333.7 337.1,333.4 333.7,333.1 330.4,332.9 327.0,332.8 323.7,332.7 320.3,332.6 317.0,332.6 313.6,332.6 310.3,332.7 306.9,332.8 303.5,332.9 300.2,333.0 296.8,333.1 293.5,333.2 290.1,333.4 286.7,333.5 283.4,333.6 280.0,333.8 276.7,333.9 273.3,334.0 269.9,334.2 266.6,334.3 263.2,334.5 259.9,334.6 256.5,334.7 253.2,334.8 249.8,334.9 246.4,335.1 243.1,335.2 239.7,335.3 236.4,335.4 233.0,335.5 229.6,335.6 226.3,335.7 222.9,335.7 219.6,335.8 216.2,335.9 212.8,336.0 209.5,336.1 206.1,336.1 202.7,336.2 199.4,336.3 196.0,336.3 192.7,336.3 189.3,336.4 185.9,336.4 182.6,336.4 179.2,336.4 175.9,336.3 172.5,336.3 169.1,336.2 165.8,336.1 162.4,336.1 159.1,336.0 155.7,335.8 152.3,335.7 149.0,335.6 145.6,335.5 142.3,335.3 138.9,335.2 135.5,335.0 132.2,334.8 128.8,334.6 125.5,334.3 122.2,334.0 118.8,333.6 115.5,333.2 112.2,332.7 108.9,332.2 105.5,331.6 102.3,331.0 99.0,330.3 97.3,330.0 95.7,329.6 94.0,329.2 92.4,328.9 82.6,326.5" fill="#24E024" stroke="#24E024" stroke-width="0.35"/>
<polygon points="82.6,326.5 92.4,328.9 94.0,329.2 95.7,329.6 97.3,330.0 99.0,330.3 102.3,331.0 105.5,331.6 108.9,332.2 112.2,332.7 115.5,333.2 118.8,333.6 122.2,334.0 125.5,334.3 128.8,334.6 132.2,334.8 135.5,335.0 138.9,335.2 142.3,335.3 145.6,335.5 149.0,335.6 152.3,335.7 155.7,335.8 159.1,336.0 162.4,336.1 165.8,336.1 169.1,336.2 172.5,336.3 175.9,336.3 179.2,336.4 182.6,336.4 185.9,336.4 189.3,336.4 192.7,336.3 196.0,336.3 199.4,336.3 202.7,336.2 206.1,336.1 209.5,336.1 212.8,336.0 216.2,335.9 219.6,335.8 222.9,335.7 226.3,335.7 229.6,335.6 233.0,335.5 236.4,335.4 239.7,335.3 243.1,335.2 246.4,335.1 249.8,334.9 253.2,334.8 256.5,334.7 259.9,334.6 263.2,334.5 266.6,334.3 269.9,334.2 273.3,334.0 276.7,333.9 280.0,333.8 283.4,333.6 286.7,333.5 290.1,333.4 293.5,333.2 296.8,333.1 300.2,333.0 303.5,332.9 306.9,332.8 310.3,332.7 313.6,332.6 317.0,332.6 320.3,332.6 323.7,332.7 327.0,332.8 330.4,332.9 333.7,333.1 337.1,333.4 340.4,333.7 343.8,334.1 347.1,334.6 350.4,335.1 353.7,335.7 357.0,336.4 360.2,337.2 363.5,338.1 366.7,339.0 369.9,340.0 373.0,341.1 376.2,342.3 379.3,343.5 382.4,344.8 385.4,346.2 388.4,347.6 391.4,349.2 394.3,350.9 397.1,352.6 400.0,354.3 402.8,356.2 405.5,358.0 408.3,359.9 411.0,361.8 413.8,363.8 416.5,365.7 419.3,367.6 422.1,369.5 424.9,371.3 427.8,373.0 430.7,374.7 433.6,376.3 436.5,377.9 439.5,379.5 442.5,381.0 445.5,382.6 448.5,384.1 451.5,385.5 454.5,387.0 457.6,388.4 460.7,389.8 463.7,391.1 466.8,392.4 469.9,393.7 473.0,394.9 476.2,396.2 479.3,397.3 482.4,398.5 485.6,399.7 488.7,400.8 491.9,402.0 495.0,403.2 498.2,404.3 501.3,405.5 504.5,406.7 507.6,408.0 510.7,409.3 513.7,410.9 514.8,413.5 517.5,415.3 520.5,416.9 523.5,418.4 526.5,419.9 529.6,421.3 532.6,422.7 535.7,424.1 538.8,425.4 541.9,426.7 545.0,427.9 548.1,429.1 551.2,430.3 554.4,431.5 557.5,432.6 560.7,433.7 563.9,434.8 567.1,435.8 570.2,436.9 573.4,438.0 576.6,439.1 579.8,440.2 582.9,441.3 586.1,442.3 589.3,443.3 592.5,444.3 595.8,445.3 599.0,446.3 602.2,447.3 605.4,448.2 608.6,449.2 611.8,450.2 615.0,451.3 618.2,452.3 621.3,453.4 624.5,454.6 627.6,455.9 630.6,457.3 633.6,458.8 636.5,460.4 639.3,462.2 642.1,464.0 644.7,466.0 647.3,468.1 649.8,470.3 652.2,472.6 654.5,475.0 656.7,477.5 658.8,480.1 660.8,482.8 662.8,485.5 664.7,488.2 666.5,491.0 668.3,493.9 669.9,496.8 671.5,499.8 673.1,502.7 674.6,505.7 676.2,508.7 677.7,511.7 679.2,514.7 680.7,517.7 682.2,520.7 683.7,523.7 685.3,526.7 686.8,529.6 688.4,532.6 690.0,535.6 691.6,538.5 693.1,541.5 694.7,544.5 696.2,547.5 697.8,550.5 699.3,553.4 700.8,556.4 702.4,559.4 703.9,562.4 705.4,565.4 707.0,568.4 708.5,571.4 710.2,574.3 711.8,577.2 713.6,580.1 715.4,582.9 717.2,585.7 719.0,588.5 720.9,591.2 722.9,594.0 724.8,596.7 726.9,599.3 728.9,602.0 731.0,604.6 733.1,607.3 735.2,609.9 737.3,612.5 739.5,615.0 741.8,617.4 744.1,619.8 746.5,622.1 749.0,624.3 750.2,625.5 751.5,626.6 752.8,627.7 754.1,628.8 762.2,634.7 762.2,635.0 754.0,629.1 752.7,628.0 751.4,626.9 750.2,625.8 749.0,624.7 746.5,622.4 744.1,620.1 741.7,617.8 739.4,615.3 737.2,612.8 735.1,610.2 733.0,607.6 730.9,605.0 728.9,602.3 726.8,599.7 724.8,597.0 722.8,594.3 720.9,591.6 719.0,588.8 717.1,586.0 715.3,583.2 713.5,580.4 711.7,577.6 710.1,574.7 708.4,571.7 706.9,568.8 705.3,565.8 703.8,562.8 702.2,559.8 700.7,556.8 699.1,553.9 697.6,550.9 696.1,547.9 694.5,544.9 692.9,541.9 691.4,539.0 689.8,536.0 688.2,533.0 686.6,530.1 685.1,527.1 683.5,524.1 682.0,521.1 680.5,518.1 679.0,515.1 677.5,512.1 676.0,509.1 674.4,506.2 672.9,503.2 671.3,500.2 669.7,497.3 668.0,494.4 666.3,491.5 664.5,488.7 662.6,485.9 660.6,483.2 658.5,480.6 656.4,478.0 654.2,475.5 651.9,473.1 649.5,470.8 647.0,468.6 644.4,466.5 641.7,464.6 639.0,462.7 636.1,461.0 633.2,459.4 630.3,457.9 627.2,456.5 624.1,455.2 621.0,454.0 617.9,452.9 614.7,451.9 611.5,450.9 608.3,449.9 605.1,448.9 601.8,447.9 598.6,447.0 595.4,446.0 592.2,445.0 589.0,444.0 585.8,443.0 582.6,442.0 579.4,441.0 576.2,439.9 573.0,438.8 569.9,437.7 566.7,436.6 563.5,435.5 560.3,434.5 557.2,433.4 554.0,432.2 550.9,431.1 547.7,429.9 544.6,428.7 541.5,427.4 538.4,426.2 535.3,424.9 532.3,423.5 529.2,422.1 526.2,420.7 523.1,419.3 520.1,417.8 517.2,416.2 514.4,414.4 513.2,411.8 510.2,410.3 507.1,409.0 504.0,407.7 500.9,406.5 497.7,405.3 494.5,404.1 491.4,403.0 488.3,401.8 485.1,400.6 482.0,399.4 478.8,398.3 475.7,397.0 472.6,395.8 469.5,394.6 466.4,393.3 463.3,391.9 460.2,390.6 457.2,389.2 454.1,387.8 451.1,386.3 448.1,384.8 445.1,383.3 442.1,381.8 439.1,380.3 436.2,378.7 433.2,377.1 430.3,375.4 427.4,373.7 424.5,372.0 421.7,370.2 418.9,368.3 416.2,366.4 413.4,364.5 410.7,362.5 408.0,360.6 405.2,358.7 402.5,356.8 399.7,355.0 396.9,353.2 394.0,351.5 391.1,349.8 388.2,348.3 385.2,346.8 382.1,345.4 379.0,344.1 375.9,342.9 372.8,341.7 369.6,340.6 366.4,339.6 363.2,338.6 360.0,337.8 356.7,337.0 353.4,336.3 350.1,335.7 346.8,335.1 343.5,334.7 340.2,334.2 336.9,333.9 333.5,333.6 330.2,333.4 326.8,333.3 323.5,333.2 320.1,333.1 316.7,333.1 313.4,333.2 310.0,333.2 306.7,333.3 303.3,333.4 300.0,333.5 296.6,333.6 293.2,333.7 289.9,333.9 286.5,334.0 283.2,334.1 279.8,334.3 276.4,334.4 273.1,334.5 269.7,334.7 266.4,334.8 263.0,334.9 259.7,335.0 256.3,335.2 252.9,335.3 249.6,335.4 246.2,335.5 242.9,335.6 239.5,335.7 236.1,335.8 232.8,335.9 229.4,336.0 226.1,336.1 222.7,336.2 219.4,336.2 216.0,336.3 212.6,336.4 209.3,336.5 205.9,336.5 202.6,336.6 199.2,336.6 195.8,336.7 192.5,336.7 189.1,336.7 185.8,336.7 182.4,336.7 179.0,336.7 175.7,336.7 172.3,336.6 169.0,336.6 165.6,336.5 162.2,336.4 158.9,336.3 155.5,336.2 152.2,336.1 148.8,335.9 145.4,335.8 142.1,335.7 138.7,335.5 135.4,335.3 132.0,335.1 128.7,334.9 125.3,334.6 122.0,334.3 118.6,333.9 115.3,333.5 112.0,333.1 108.7,332.5 105.4,332.0 102.1,331.3 98.8,330.6 97.2,330.3 95.5,330.0 93.9,329.6 92.2,329.3 82.4,326.9" fill="#26E226" stroke="#26E226" stroke-width="0.35"/>
<polygon points="82.4,326.9 92.2,329.3 93.9,329.6 95.5,330.0 97.2,330.3 98.8,330.6 102.1,331.3 105.4,332.0 108.7,332.5 112.0,333.1 115.3,333.5 118.6,333.9 122.0,334.3 125.3,334.6 128.7,334.9 132.0,335.1 135.4,335.3 138.7,335.5 142.1,335.7 145.4,335.8 148.8,335.9 152.2,336.1 155.5,336.2 158.9,336.3 162.2,336.4 165.6,336.5 169.0,336.6 172.3,336.6 175.7,336.7 179.0,336.7 182.4,336.7 185.8,336.7 189.1,336.7 192.5,336.7 195.8,336.7 199.2,336.6 202.6,336.6 205.9,336.5 209.3,336.5 212.6,336.4 216.0,336.3 219.4,336.2 222.7,336.2 226.1,336.1 229.4,336.0 232.8,335.9 236.1,335.8 239.5,335.7 242.9,335.6 246.2,335.5 249.6,335.4 252.9,335.3 256.3,335.2 259.7,335.0 263.0,334.9 266.4,334.8 269.7,334.7 273.1,334.5 276.4,334.4 279.8,334.3 283.2,334.1 286.5,334.0 289.9,333.9 293.2,333.7 296.6,333.6 300.0,333.5 303.3,333.4 306.7,333.3 310.0,333.2 313.4,333.2 316.7,333.1 320.1,333.1 323.5,333.2 326.8,333.3 330.2,333.4 333.5,333.6 336.9,333.9 340.2,334.2 343.5,334.7 346.8,335.1 350.1,335.7 353.4,336.3 356.7,337.0 360.0,337.8 363.2,338.6 366.4,339.6 369.6,340.6 372.8,341.7 375.9,342.9 379.0,344.1 382.1,345.4 385.2,346.8 388.2,348.3 391.1,349.8 394.0,351.5 396.9,353.2 399.7,355.0 402.5,356.8 405.2,358.7 408.0,360.6 410.7,362.5 413.4,364.5 416.2,366.4 418.9,368.3 421.7,370.2 424.5,372.0 427.4,373.7 430.3,375.4 433.2,377.1 436.2,378.7 439.1,380.3 442.1,381.8 445.1,383.3 448.1,384.8 451.1,386.3 454.1,387.8 457.2,389.2 460.2,390.6 463.3,391.9 466.4,393.3 469.5,394.6 472.6,395.8 475.7,397.0 478.8,398.3 482.0,399.4 485.1,400.6 488.3,401.8 491.4,403.0 494.5,404.1 497.7,405.3 500.9,406.5 504.0,407.7 507.1,409.0 510.2,410.3 513.2,411.8 514.4,414.4 517.2,416.2 520.1,417.8 523.1,419.3 526.2,420.7 529.2,422.1 532.3,423.5 535.3,424.9 538.4,426.2 541.5,427.4 544.6,428.7 547.7,429.9 550.9,431.1 554.0,432.2 557.2,433.4 560.3,434.5 563.5,435.5 566.7,436.6 569.9,437.7 573.0,438.8 576.2,439.9 579.4,441.0 582.6,442.0 585.8,443.0 589.0,444.0 592.2,445.0 595.4,446.0 598.6,447.0 601.8,447.9 605.1,448.9 608.3,449.9 611.5,450.9 614.7,451.9 617.9,452.9 621.0,454.0 624.1,455.2 627.2,456.5 630.3,457.9 633.2,459.4 636.1,461.0 639.0,462.7 641.7,464.6 644.4,466.5 647.0,468.6 649.5,470.8 651.9,473.1 654.2,475.5 656.4,478.0 658.5,480.6 660.6,483.2 662.6,485.9 664.5,488.7 666.3,491.5 668.0,494.4 669.7,497.3 671.3,500.2 672.9,503.2 674.4,506.2 676.0,509.1 677.5,512.1 679.0,515.1 680.5,518.1 682.0,521.1 683.5,524.1 685.1,527.1 686.6,530.1 688.2,533.0 689.8,536.0 691.4,539.0 692.9,541.9 694.5,544.9 696.1,547.9 697.6,550.9 699.1,553.9 700.7,556.8 702.2,559.8 703.8,562.8 705.3,565.8 706.9,568.8 708.4,571.7 710.1,574.7 711.7,577.6 713.5,580.4 715.3,583.2 717.1,586.0 719.0,588.8 720.9,591.6 722.8,594.3 724.8,597.0 726.8,599.7 728.9,602.3 730.9,605.0 733.0,607.6 735.1,610.2 737.2,612.8 739.4,615.3 741.7,617.8 744.1,620.1 746.5,622.4 749.0,624.7 750.2,625.8 751.4,626.9 752.7,628.0 754.0,629.1 762.2,635.0 762.1,635.3 754.0,629.4 752.7,628.3 751.4,627.2 750.1,626.1 748.9,625.0 746.4,622.7 744.0,620.4 741.7,618.1 739.4,615.6 737.2,613.1 735.0,610.6 732.9,607.9 730.9,605.3 728.8,602.7 726.7,600.0 724.7,597.3 722.7,594.6 720.8,591.9 718.9,589.1 717.0,586.4 715.2,583.6 713.4,580.8 711.7,577.9 710.0,575.0 708.3,572.1 706.7,569.1 705.2,566.2 703.6,563.2 702.1,560.2 700.5,557.2 699.0,554.3 697.4,551.3 695.9,548.3 694.3,545.3 692.8,542.4 691.2,539.4 689.6,536.4 688.0,533.5 686.4,530.5 684.9,527.5 683.4,524.5 681.8,521.5 680.3,518.6 678.8,515.6 677.3,512.6 675.8,509.6 674.2,506.6 672.7,503.6 671.1,500.7 669.5,497.7 667.8,494.8 666.1,492.0 664.2,489.2 662.3,486.4 660.3,483.7 658.3,481.1 656.1,478.5 653.9,476.1 651.6,473.7 649.2,471.4 646.7,469.2 644.1,467.1 641.4,465.1 638.7,463.3 635.8,461.6 632.9,460.0 629.9,458.5 626.9,457.1 623.8,455.8 620.7,454.7 617.5,453.6 614.3,452.5 611.1,451.5 607.9,450.5 604.7,449.5 601.5,448.6 598.3,447.6 595.1,446.7 591.8,445.7 588.6,444.7 585.4,443.8 582.2,442.7 579.0,441.7 575.9,440.6 572.7,439.6 569.5,438.5 566.3,437.4 563.2,436.3 560.0,435.3 556.8,434.2 553.7,433.0 550.5,431.9 547.4,430.7 544.3,429.5 541.1,428.2 538.0,427.0 535.0,425.7 531.9,424.3 528.8,423.0 525.8,421.5 522.8,420.1 519.7,418.6 516.8,417.1 514.0,415.3 512.7,412.8 509.7,411.2 506.6,409.9 503.5,408.7 500.4,407.4 497.2,406.2 494.1,405.1 490.9,403.9 487.8,402.7 484.6,401.5 481.5,400.4 478.4,399.2 475.2,397.9 472.1,396.7 469.0,395.4 465.9,394.1 462.9,392.8 459.8,391.4 456.8,390.0 453.7,388.6 450.7,387.1 447.7,385.6 444.7,384.1 441.7,382.6 438.7,381.0 435.8,379.4 432.9,377.8 429.9,376.2 427.1,374.4 424.2,372.7 421.4,370.9 418.6,369.0 415.8,367.1 413.1,365.2 410.4,363.2 407.7,361.3 404.9,359.4 402.2,357.5 399.4,355.7 396.6,353.9 393.7,352.1 390.8,350.5 387.9,348.9 384.9,347.4 381.8,346.0 378.8,344.7 375.7,343.5 372.5,342.3 369.4,341.2 366.2,340.2 363.0,339.2 359.7,338.4 356.5,337.6 353.2,336.9 349.9,336.2 346.6,335.7 343.3,335.2 340.0,334.8 336.6,334.5 333.3,334.2 329.9,334.0 326.6,333.8 323.2,333.7 319.9,333.7 316.5,333.7 313.2,333.7 309.8,333.8 306.4,333.8 303.1,333.9 299.7,334.0 296.4,334.1 293.0,334.3 289.7,334.4 286.3,334.5 282.9,334.6 279.6,334.8 276.2,334.9 272.9,335.0 269.5,335.1 266.2,335.3 262.8,335.4 259.4,335.5 256.1,335.6 252.7,335.7 249.4,335.8 246.0,335.9 242.7,336.0 239.3,336.1 235.9,336.2 232.6,336.3 229.2,336.4 225.9,336.5 222.5,336.6 219.2,336.6 215.8,336.7 212.4,336.8 209.1,336.9 205.7,336.9 202.4,337.0 199.0,337.0 195.6,337.1 192.3,337.1 188.9,337.1 185.6,337.1 182.2,337.1 178.8,337.1 175.5,337.0 172.1,337.0 168.8,336.9 165.4,336.8 162.1,336.7 158.7,336.6 155.3,336.5 152.0,336.4 148.6,336.3 145.3,336.1 141.9,336.0 138.5,335.8 135.2,335.7 131.8,335.5 128.5,335.3 125.1,335.0 121.8,334.7 118.5,334.3 115.1,333.9 111.8,333.4 108.5,332.9 105.2,332.3 101.9,331.7 98.6,331.0 97.0,330.7 95.3,330.3 93.7,330.0 92.1,329.6 82.3,327.3" fill="#28E428" stroke="#28E428" stroke-width="0.35"/>
<polygon points="82.3,327.3 92.1,329.6 93.7,330.0 95.3,330.3 97.0,330.7 98.6,331.0 101.9,331.7 105.2,332.3 108.5,332.9 111.8,333.4 115.1,333.9 118.5,334.3 121.8,334.7 125.1,335.0 128.5,335.3 131.8,335.5 135.2,335.7 138.5,335.8 141.9,336.0 145.3,336.1 148.6,336.3 152.0,336.4 155.3,336.5 158.7,336.6 162.1,336.7 165.4,336.8 168.8,336.9 172.1,337.0 175.5,337.0 178.8,337.1 182.2,337.1 185.6,337.1 188.9,337.1 192.3,337.1 195.6,337.1 199.0,337.0 202.4,337.0 205.7,336.9 209.1,336.9 212.4,336.8 215.8,336.7 219.2,336.6 222.5,336.6 225.9,336.5 229.2,336.4 232.6,336.3 235.9,336.2 239.3,336.1 242.7,336.0 246.0,335.9 249.4,335.8 252.7,335.7 256.1,335.6 259.4,335.5 262.8,335.4 266.2,335.3 269.5,335.1 272.9,335.0 276.2,334.9 279.6,334.8 282.9,334.6 286.3,334.5 289.7,334.4 293.0,334.3 296.4,334.1 299.7,334.0 303.1,333.9 306.4,333.8 309.8,333.8 313.2,333.7 316.5,333.7 319.9,333.7 323.2,333.7 326.6,333.8 329.9,334.0 333.3,334.2 336.6,334.5 340.0,334.8 343.3,335.2 346.6,335.7 349.9,336.2 353.2,336.9 356.5,337.6 359.7,338.4 363.0,339.2 366.2,340.2 369.4,341.2 372.5,342.3 375.7,343.5 378.8,344.7 381.8,346.0 384.9,347.4 387.9,348.9 390.8,350.5 393.7,352.1 396.6,353.9 399.4,355.7 402.2,357.5 404.9,359.4 407.7,361.3 410.4,363.2 413.1,365.2 415.8,367.1 418.6,369.0 421.4,370.9 424.2,372.7 427.1,374.4 429.9,376.2 432.9,377.8 435.8,379.4 438.7,381.0 441.7,382.6 444.7,384.1 447.7,385.6 450.7,387.1 453.7,388.6 456.8,390.0 459.8,391.4 462.9,392.8 465.9,394.1 469.0,395.4 472.1,396.7 475.2,397.9 478.4,399.2 481.5,400.4 484.6,401.5 487.8,402.7 490.9,403.9 494.1,405.1 497.2,406.2 500.4,407.4 503.5,408.7 506.6,409.9 509.7,411.2 512.7,412.8 514.0,415.3 516.8,417.1 519.7,418.6 522.8,420.1 525.8,421.5 528.8,423.0 531.9,424.3 535.0,425.7 538.0,427.0 541.1,428.2 544.3,429.5 547.4,430.7 550.5,431.9 553.7,433.0 556.8,434.2 560.0,435.3 563.2,436.3 566.3,437.4 569.5,438.5 572.7,439.6 575.9,440.6 579.0,441.7 582.2,442.7 585.4,443.8 588.6,444.7 591.8,445.7 595.1,446.7 598.3,447.6 601.5,448.6 604.7,449.5 607.9,450.5 611.1,451.5 614.3,452.5 617.5,453.6 620.7,454.7 623.8,455.8 626.9,457.1 629.9,458.5 632.9,460.0 635.8,461.6 638.7,463.3 641.4,465.1 644.1,467.1 646.7,469.2 649.2,471.4 651.6,473.7 653.9,476.1 656.1,478.5 658.3,481.1 660.3,483.7 662.3,486.4 664.2,489.2 666.1,492.0 667.8,494.8 669.5,497.7 671.1,500.7 672.7,503.6 674.2,506.6 675.8,509.6 677.3,512.6 678.8,515.6 680.3,518.6 681.8,521.5 683.4,524.5 684.9,527.5 686.4,530.5 688.0,533.5 689.6,536.4 691.2,539.4 692.8,542.4 694.3,545.3 695.9,548.3 697.4,551.3 699.0,554.3 700.5,557.2 702.1,560.2 703.6,563.2 705.2,566.2 706.7,569.1 708.3,572.1 710.0,575.0 711.7,577.9 713.4,580.8 715.2,583.6 717.0,586.4 718.9,589.1 720.8,591.9 722.7,594.6 724.7,597.3 726.7,600.0 728.8,602.7 730.9,605.3 732.9,607.9 735.0,610.6 737.2,613.1 739.4,615.6 741.7,618.1 744.0,620.4 746.4,622.7 748.9,625.0 750.1,626.1 751.4,627.2 752.7,628.3 754.0,629.4 762.1,635.3 762.1,635.5 753.9,629.7 752.6,628.6 751.3,627.5 750.1,626.4 748.9,625.3 746.4,623.1 744.0,620.8 741.6,618.4 739.3,616.0 737.1,613.5 735.0,610.9 732.9,608.3 730.8,605.7 728.7,603.0 726.7,600.3 724.7,597.7 722.7,595.0 720.7,592.2 718.8,589.5 717.0,586.7 715.1,583.9 713.3,581.1 711.6,578.3 709.9,575.4 708.2,572.5 706.6,569.5 705.1,566.5 703.5,563.6 701.9,560.6 700.4,557.6 698.8,554.7 697.3,551.7 695.7,548.7 694.1,545.7 692.6,542.8 691.0,539.8 689.4,536.9 687.8,533.9 686.2,530.9 684.7,528.0 683.2,525.0 681.6,522.0 680.1,519.0 678.6,516.0 677.1,513.0 675.6,510.0 674.0,507.0 672.5,504.1 670.9,501.1 669.3,498.2 667.6,495.3 665.8,492.5 664.0,489.7 662.1,486.9 660.1,484.2 658.0,481.6 655.9,479.1 653.6,476.6 651.3,474.2 648.9,471.9 646.4,469.7 643.8,467.6 641.1,465.7 638.3,463.9 635.5,462.2 632.6,460.6 629.6,459.1 626.6,457.7 623.5,456.4 620.3,455.3 617.2,454.2 614.0,453.1 610.8,452.1 607.6,451.1 604.4,450.2 601.2,449.2 597.9,448.3 594.7,447.4 591.5,446.4 588.3,445.5 585.1,444.5 581.9,443.5 578.7,442.5 575.5,441.4 572.3,440.3 569.1,439.3 566.0,438.2 562.8,437.1 559.6,436.0 556.4,434.9 553.3,433.8 550.2,432.6 547.0,431.4 543.9,430.2 540.8,429.0 537.7,427.7 534.6,426.5 531.5,425.1 528.5,423.8 525.4,422.4 522.4,420.9 519.4,419.5 516.4,417.9 513.6,416.1 512.2,413.7 509.2,412.2 506.1,410.9 503.0,409.6 499.9,408.4 496.7,407.2 493.6,406.1 490.4,404.8 487.3,403.7 484.2,402.5 481.0,401.3 477.9,400.1 474.8,398.8 471.7,397.6 468.6,396.3 465.5,395.0 462.4,393.6 459.4,392.3 456.3,390.8 453.3,389.4 450.3,387.9 447.3,386.4 444.3,384.9 441.3,383.3 438.4,381.8 435.4,380.2 432.5,378.6 429.6,376.9 426.7,375.2 423.8,373.4 421.0,371.6 418.3,369.7 415.5,367.8 412.8,365.9 410.1,363.9 407.4,361.9 404.6,360.0 401.9,358.2 399.1,356.3 396.3,354.5 393.4,352.8 390.5,351.1 387.6,349.5 384.6,348.0 381.6,346.7 378.5,345.4 375.4,344.1 372.3,342.9 369.1,341.8 365.9,340.8 362.7,339.8 359.5,338.9 356.2,338.2 353.0,337.4 349.7,336.8 346.4,336.2 343.1,335.8 339.7,335.3 336.4,335.0 333.1,334.7 329.7,334.5 326.4,334.4 323.0,334.3 319.7,334.2 316.3,334.2 312.9,334.2 309.6,334.3 306.2,334.4 302.9,334.5 299.5,334.6 296.2,334.7 292.8,334.8 289.4,334.9 286.1,335.0 282.7,335.1 279.4,335.3 276.0,335.4 272.7,335.5 269.3,335.6 265.9,335.7 262.6,335.8 259.2,336.0 255.9,336.1 252.5,336.2 249.2,336.3 245.8,336.4 242.5,336.5 239.1,336.6 235.7,336.6 232.4,336.7 229.0,336.8 225.7,336.9 222.3,337.0 219.0,337.1 215.6,337.1 212.2,337.2 208.9,337.2 205.5,337.3 202.2,337.4 198.8,337.4 195.4,337.4 192.1,337.5 188.7,337.5 185.4,337.5 182.0,337.5 178.7,337.4 175.3,337.4 171.9,337.3 168.6,337.3 165.2,337.2 161.9,337.1 158.5,337.0 155.2,336.9 151.8,336.8 148.4,336.6 145.1,336.5 141.7,336.3 138.4,336.2 135.0,336.0 131.7,335.8 128.3,335.6 125.0,335.3 121.6,335.0 118.3,334.6 115.0,334.2 111.7,333.7 108.3,333.2 105.0,332.6 101.7,332.0 98.5,331.4 96.8,331.0 95.2,330.7 93.5,330.3 91.9,330.0 82.1,327.7" fill="#2AE62A" stroke="#2AE62A" stroke-width="0.35"/>
<polygon points="82.1,327.7 91.9,330.0 93.5,330.3 95.2,330.7 96.8,331.0 98.5,331.4 101.7,332.0 105.0,332.6 108.3,333.2 111.7,333.7 115.0,334.2 118.3,334.6 121.6,335.0 125.0,335.3 128.3,335.6 131.7,335.8 135.0,336.0 138.4,336.2 141.7,336.3 145.1,336.5 148.4,336.6 151.8,336.8 155.2,336.9 158.5,337.0 161.9,337.1 165.2,337.2 168.6,337.3 171.9,337.3 175.3,337.4 178.7,337.4 182.0,337.5 185.4,337.5 188.7,337.5 192.1,337.5 195.4,337.4 198.8,337.4 202.2,337.4 205.5,337.3 208.9,337.2 212.2,337.2 215.6,337.1 219.0,337.1 222.3,337.0 225.7,336.9 229.0,336.8 232.4,336.7 235.7,336.6 239.1,336.6 242.5,336.5 245.8,336.4 249.2,336.3 252.5,336.2 255.9,336.1 259.2,336.0 262.6,335.8 265.9,335.7 269.3,335.6 272.7,335.5 276.0,335.4 279.4,335.3 282.7,335.1 286.1,335.0 289.4,334.9 292.8,334.8 296.2,334.7 299.5,334.6 302.9,334.5 306.2,334.4 309.6,334.3 312.9,334.2 316.3,334.2 319.7,334.2 323.0,334.3 326.4,334.4 329.7,334.5 333.1,334.7 336.4,335.0 339.7,335.3 343.1,335.8 346.4,336.2 349.7,336.8 353.0,337.4 356.2,338.2 359.5,338.9 362.7,339.8 365.9,340.8 369.1,341.8 372.3,342.9 375.4,344.1 378.5,345.4 381.6,346.7 384.6,348.0 387.6,349.5 390.5,351.1 393.4,352.8 396.3,354.5 399.1,356.3 401.9,358.2 404.6,360.0 407.4,361.9 410.1,363.9 412.8,365.9 415.5,367.8 418.3,369.7 421.0,371.6 423.8,373.4 426.7,375.2 429.6,376.9 432.5,378.6 435.4,380.2 438.4,381.8 441.3,383.3 444.3,384.9 447.3,386.4 450.3,387.9 453.3,389.4 456.3,390.8 459.4,392.3 462.4,393.6 465.5,395.0 468.6,396.3 471.7,397.6 474.8,398.8 477.9,400.1 481.0,401.3 484.2,402.5 487.3,403.7 490.4,404.8 493.6,406.1 496.7,407.2 499.9,408.4 503.0,409.6 506.1,410.9 509.2,412.2 512.2,413.7 513.6,416.1 516.4,417.9 519.4,419.5 522.4,420.9 525.4,422.4 528.5,423.8 531.5,425.1 534.6,426.5 537.7,427.7 540.8,429.0 543.9,430.2 547.0,431.4 550.2,432.6 553.3,433.8 556.4,434.9 559.6,436.0 562.8,437.1 566.0,438.2 569.1,439.3 572.3,440.3 575.5,441.4 578.7,442.5 581.9,443.5 585.1,444.5 588.3,445.5 591.5,446.4 594.7,447.4 597.9,448.3 601.2,449.2 604.4,450.2 607.6,451.1 610.8,452.1 614.0,453.1 617.2,454.2 620.3,455.3 623.5,456.4 626.6,457.7 629.6,459.1 632.6,460.6 635.5,462.2 638.3,463.9 641.1,465.7 643.8,467.6 646.4,469.7 648.9,471.9 651.3,474.2 653.6,476.6 655.9,479.1 658.0,481.6 660.1,484.2 662.1,486.9 664.0,489.7 665.8,492.5 667.6,495.3 669.3,498.2 670.9,501.1 672.5,504.1 674.0,507.0 675.6,510.0 677.1,513.0 678.6,516.0 680.1,519.0 681.6,522.0 683.2,525.0 684.7,528.0 686.2,530.9 687.8,533.9 689.4,536.9 691.0,539.8 692.6,542.8 694.1,545.7 695.7,548.7 697.3,551.7 698.8,554.7 700.4,557.6 701.9,560.6 703.5,563.6 705.1,566.5 706.6,569.5 708.2,572.5 709.9,575.4 711.6,578.3 713.3,581.1 715.1,583.9 717.0,586.7 718.8,589.5 720.7,592.2 722.7,595.0 724.7,597.7 726.7,600.3 728.7,603.0 730.8,605.7 732.9,608.3 735.0,610.9 737.1,613.5 739.3,616.0 741.6,618.4 744.0,620.8 746.4,623.1 748.9,625.3 750.1,626.4 751.3,627.5 752.6,628.6 753.9,629.7 762.1,635.5 762.1,635.8 753.9,630.0 752.6,628.9 751.3,627.9 750.0,626.7 748.8,625.6 746.3,623.4 743.9,621.1 741.5,618.7 739.3,616.3 737.1,613.8 734.9,611.2 732.8,608.6 730.7,606.0 728.7,603.3 726.6,600.7 724.6,598.0 722.6,595.3 720.7,592.6 718.8,589.8 716.9,587.1 715.0,584.3 713.2,581.5 711.5,578.6 709.8,575.7 708.1,572.8 706.5,569.9 704.9,566.9 703.4,564.0 701.8,561.0 700.2,558.0 698.7,555.1 697.1,552.1 695.5,549.1 694.0,546.2 692.4,543.2 690.8,540.2 689.2,537.3 687.6,534.3 686.0,531.4 684.5,528.4 683.0,525.4 681.4,522.4 679.9,519.4 678.4,516.4 676.9,513.4 675.4,510.5 673.8,507.5 672.3,504.5 670.7,501.6 669.1,498.6 667.4,495.8 665.6,492.9 663.7,490.1 661.8,487.4 659.8,484.7 657.7,482.1 655.6,479.6 653.4,477.1 651.0,474.7 648.6,472.4 646.1,470.3 643.5,468.2 640.8,466.3 638.0,464.4 635.2,462.7 632.2,461.2 629.3,459.7 626.2,458.3 623.1,457.0 620.0,455.9 616.8,454.8 613.7,453.7 610.5,452.7 607.2,451.8 604.0,450.8 600.8,449.9 597.6,449.0 594.4,448.0 591.1,447.1 587.9,446.2 584.7,445.2 581.5,444.2 578.3,443.2 575.1,442.2 572.0,441.1 568.8,440.0 565.6,439.0 562.4,437.9 559.3,436.8 556.1,435.7 552.9,434.6 549.8,433.4 546.7,432.2 543.5,431.0 540.4,429.8 537.3,428.5 534.2,427.3 531.2,425.9 528.1,424.6 525.0,423.2 522.0,421.8 519.0,420.3 516.0,418.8 513.2,417.0 511.7,414.7 508.7,413.2 505.6,411.9 502.5,410.6 499.4,409.4 496.2,408.1 493.1,407.0 490.0,405.8 486.8,404.6 483.7,403.4 480.6,402.2 477.4,401.0 474.3,399.7 471.2,398.5 468.1,397.2 465.1,395.8 462.0,394.5 458.9,393.1 455.9,391.7 452.9,390.2 449.9,388.7 446.9,387.2 443.9,385.7 440.9,384.1 438.0,382.5 435.0,380.9 432.1,379.3 429.2,377.6 426.3,375.9 423.5,374.1 420.7,372.3 417.9,370.4 415.2,368.5 412.5,366.5 409.8,364.6 407.0,362.6 404.3,360.7 401.6,358.8 398.8,357.0 396.0,355.2 393.1,353.4 390.3,351.8 387.3,350.2 384.3,348.7 381.3,347.3 378.2,346.0 375.1,344.7 372.0,343.5 368.9,342.4 365.7,341.3 362.5,340.4 359.2,339.5 356.0,338.7 352.7,338.0 349.4,337.4 346.1,336.8 342.8,336.3 339.5,335.9 336.2,335.5 332.8,335.3 329.5,335.0 326.1,334.9 322.8,334.8 319.4,334.7 316.1,334.7 312.7,334.8 309.4,334.8 306.0,334.9 302.6,335.0 299.3,335.1 295.9,335.2 292.6,335.3 289.2,335.4 285.9,335.5 282.5,335.6 279.2,335.7 275.8,335.9 272.4,336.0 269.1,336.1 265.7,336.2 262.4,336.3 259.0,336.4 255.7,336.5 252.3,336.6 249.0,336.7 245.6,336.8 242.2,336.9 238.9,337.0 235.5,337.1 232.2,337.2 228.8,337.2 225.5,337.3 222.1,337.4 218.8,337.5 215.4,337.5 212.0,337.6 208.7,337.6 205.3,337.7 202.0,337.7 198.6,337.8 195.3,337.8 191.9,337.8 188.5,337.8 185.2,337.8 181.8,337.8 178.5,337.8 175.1,337.7 171.8,337.7 168.4,337.6 165.0,337.5 161.7,337.4 158.3,337.3 155.0,337.2 151.6,337.1 148.3,337.0 144.9,336.8 141.5,336.7 138.2,336.5 134.8,336.4 131.5,336.2 128.1,335.9 124.8,335.7 121.5,335.3 118.1,335.0 114.8,334.5 111.5,334.1 108.2,333.6 104.9,333.0 101.6,332.4 98.3,331.7 96.6,331.4 95.0,331.0 93.4,330.7 91.7,330.4 81.9,328.1" fill="#28E328" stroke="#28E328" stroke-width="0.35"/>
<polygon points="81.9,328.1 91.7,330.4 93.4,330.7 95.0,331.0 96.6,331.4 98.3,331.7 101.6,332.4 104.9,333.0 108.2,333.6 111.5,334.1 114.8,334.5 118.1,335.0 121.5,335.3 124.8,335.7 128.1,335.9 131.5,336.2 134.8,336.4 138.2,336.5 141.5,336.7 144.9,336.8 148.3,337.0 151.6,337.1 155.0,337.2 158.3,337.3 161.7,337.4 165.0,337.5 168.4,337.6 171.8,337.7 175.1,337.7 178.5,337.8 181.8,337.8 185.2,337.8 188.5,337.8 191.9,337.8 195.3,337.8 198.6,337.8 202.0,337.7 205.3,337.7 208.7,337.6 212.0,337.6 215.4,337.5 218.8,337.5 222.1,337.4 225.5,337.3 228.8,337.2 232.2,337.2 235.5,337.1 238.9,337.0 242.2,336.9 245.6,336.8 249.0,336.7 252.3,336.6 255.7,336.5 259.0,336.4 262.4,336.3 265.7,336.2 269.1,336.1 272.4,336.0 275.8,335.9 279.2,335.7 282.5,335.6 285.9,335.5 289.2,335.4 292.6,335.3 295.9,335.2 299.3,335.1 302.6,335.0 306.0,334.9 309.4,334.8 312.7,334.8 316.1,334.7 319.4,334.7 322.8,334.8 326.1,334.9 329.5,335.0 332.8,335.3 336.2,335.5 339.5,335.9 342.8,336.3 346.1,336.8 349.4,337.4 352.7,338.0 356.0,338.7 359.2,339.5 362.5,340.4 365.7,341.3 368.9,342.4 372.0,343.5 375.1,344.7 378.2,346.0 381.3,347.3 384.3,348.7 387.3,350.2 390.3,351.8 393.1,353.4 396.0,355.2 398.8,357.0 401.6,358.8 404.3,360.7 407.0,362.6 409.8,364.6 412.5,366.5 415.2,368.5 417.9,370.4 420.7,372.3 423.5,374.1 426.3,375.9 429.2,377.6 432.1,379.3 435.0,380.9 438.0,382.5 440.9,384.1 443.9,385.7 446.9,387.2 449.9,388.7 452.9,390.2 455.9,391.7 458.9,393.1 462.0,394.5 465.1,395.8 468.1,397.2 471.2,398.5 474.3,399.7 477.4,401.0 480.6,402.2 483.7,403.4 486.8,404.6 490.0,405.8 493.1,407.0 496.2,408.1 499.4,409.4 502.5,410.6 505.6,411.9 508.7,413.2 511.7,414.7 513.2,417.0 516.0,418.8 519.0,420.3 522.0,421.8 525.0,423.2 528.1,424.6 531.2,425.9 534.2,427.3 537.3,428.5 540.4,429.8 543.5,431.0 546.7,432.2 549.8,433.4 552.9,434.6 556.1,435.7 559.3,436.8 562.4,437.9 565.6,439.0 568.8,440.0 572.0,441.1 575.1,442.2 578.3,443.2 581.5,444.2 584.7,445.2 587.9,446.2 591.1,447.1 594.4,448.0 597.6,449.0 600.8,449.9 604.0,450.8 607.2,451.8 610.5,452.7 613.7,453.7 616.8,454.8 620.0,455.9 623.1,457.0 626.2,458.3 629.3,459.7 632.2,461.2 635.2,462.7 638.0,464.4 640.8,466.3 643.5,468.2 646.1,470.3 648.6,472.4 651.0,474.7 653.4,477.1 655.6,479.6 657.7,482.1 659.8,484.7 661.8,487.4 663.7,490.1 665.6,492.9 667.4,495.8 669.1,498.6 670.7,501.6 672.3,504.5 673.8,507.5 675.4,510.5 676.9,513.4 678.4,516.4 679.9,519.4 681.4,522.4 683.0,525.4 684.5,528.4 686.0,531.4 687.6,534.3 689.2,537.3 690.8,540.2 692.4,543.2 694.0,546.2 695.5,549.1 697.1,552.1 698.7,555.1 700.2,558.0 701.8,561.0 703.4,564.0 704.9,566.9 706.5,569.9 708.1,572.8 709.8,575.7 711.5,578.6 713.2,581.5 715.0,584.3 716.9,587.1 718.8,589.8 720.7,592.6 722.6,595.3 724.6,598.0 726.6,600.7 728.7,603.3 730.7,606.0 732.8,608.6 734.9,611.2 737.1,613.8 739.3,616.3 741.5,618.7 743.9,621.1 746.3,623.4 748.8,625.6 750.0,626.7 751.3,627.9 752.6,628.9 753.9,630.0 762.1,635.8 762.0,636.1 753.8,630.3 752.5,629.2 751.2,628.2 750.0,627.0 748.8,625.9 746.3,623.7 743.8,621.4 741.5,619.0 739.2,616.6 737.0,614.1 734.8,611.6 732.7,609.0 730.6,606.3 728.6,603.7 726.5,601.0 724.5,598.3 722.5,595.6 720.6,592.9 718.7,590.2 716.8,587.4 715.0,584.6 713.2,581.8 711.4,579.0 709.7,576.1 708.0,573.2 706.4,570.3 704.8,567.3 703.2,564.3 701.7,561.4 700.1,558.4 698.5,555.5 696.9,552.5 695.3,549.5 693.8,546.6 692.2,543.6 690.6,540.7 689.0,537.7 687.4,534.8 685.8,531.8 684.3,528.8 682.8,525.8 681.3,522.9 679.7,519.9 678.2,516.9 676.7,513.9 675.2,510.9 673.6,507.9 672.1,505.0 670.5,502.0 668.8,499.1 667.1,496.2 665.3,493.4 663.5,490.6 661.6,487.9 659.6,485.2 657.5,482.6 655.3,480.1 653.1,477.6 650.7,475.2 648.3,473.0 645.8,470.8 643.2,468.8 640.5,466.8 637.7,465.0 634.8,463.3 631.9,461.7 628.9,460.3 625.9,458.9 622.8,457.7 619.7,456.5 616.5,455.4 613.3,454.4 610.1,453.4 606.9,452.4 603.7,451.5 600.5,450.5 597.2,449.6 594.0,448.7 590.8,447.8 587.6,446.9 584.4,445.9 581.2,444.9 578.0,443.9 574.8,442.9 571.6,441.9 568.4,440.8 565.2,439.7 562.1,438.7 558.9,437.6 555.7,436.5 552.6,435.4 549.4,434.2 546.3,433.0 543.2,431.8 540.1,430.6 537.0,429.3 533.9,428.0 530.8,426.7 527.7,425.4 524.7,424.0 521.6,422.6 518.6,421.2 515.6,419.7 512.8,417.9 511.2,415.6 508.2,414.2 505.1,412.8 502.0,411.6 498.9,410.3 495.7,409.1 492.6,408.0 489.5,406.7 486.3,405.5 483.2,404.3 480.1,403.1 477.0,401.9 473.9,400.6 470.8,399.3 467.7,398.0 464.6,396.7 461.6,395.3 458.5,393.9 455.5,392.5 452.5,391.0 449.5,389.5 446.5,388.0 443.5,386.5 440.6,384.9 437.6,383.3 434.7,381.7 431.7,380.0 428.8,378.4 426.0,376.6 423.1,374.9 420.3,373.0 417.6,371.1 414.8,369.2 412.1,367.2 409.4,365.3 406.7,363.3 404.0,361.4 401.3,359.5 398.5,357.6 395.7,355.8 392.9,354.1 390.0,352.4 387.1,350.8 384.1,349.3 381.0,347.9 378.0,346.6 374.9,345.3 371.8,344.1 368.6,343.0 365.4,341.9 362.2,341.0 359.0,340.1 355.7,339.3 352.5,338.6 349.2,337.9 345.9,337.4 342.6,336.9 339.3,336.4 335.9,336.1 332.6,335.8 329.3,335.6 325.9,335.4 322.6,335.3 319.2,335.3 315.8,335.3 312.5,335.3 309.1,335.3 305.8,335.4 302.4,335.5 299.1,335.6 295.7,335.7 292.4,335.8 289.0,335.9 285.7,336.0 282.3,336.1 278.9,336.2 275.6,336.4 272.2,336.5 268.9,336.6 265.5,336.7 262.2,336.8 258.8,336.9 255.5,337.0 252.1,337.1 248.8,337.2 245.4,337.3 242.0,337.3 238.7,337.4 235.3,337.5 232.0,337.6 228.6,337.7 225.3,337.7 221.9,337.8 218.6,337.9 215.2,337.9 211.8,338.0 208.5,338.0 205.1,338.1 201.8,338.1 198.4,338.2 195.1,338.2 191.7,338.2 188.3,338.2 185.0,338.2 181.6,338.2 178.3,338.1 174.9,338.1 171.6,338.0 168.2,338.0 164.9,337.9 161.5,337.8 158.1,337.7 154.8,337.6 151.4,337.4 148.1,337.3 144.7,337.2 141.4,337.0 138.0,336.9 134.7,336.7 131.3,336.5 128.0,336.3 124.6,336.0 121.3,335.7 118.0,335.3 114.6,334.9 111.3,334.4 108.0,333.9 104.7,333.3 101.4,332.7 98.1,332.1 96.5,331.7 94.8,331.4 93.2,331.1 91.5,330.7 81.7,328.5" fill="#26E026" stroke="#26E026" stroke-width="0.35"/>
<polygon points="81.7,328.5 91.5,330.7 93.2,331.1 94.8,331.4 96.5,331.7 98.1,332.1 101.4,332.7 104.7,333.3 108.0,333.9 111.3,334.4 114.6,334.9 118.0,335.3 121.3,335.7 124.6,336.0 128.0,336.3 131.3,336.5 134.7,336.7 138.0,336.9 141.4,337.0 144.7,337.2 148.1,337.3 151.4,337.4 154.8,337.6 158.1,337.7 161.5,337.8 164.9,337.9 168.2,338.0 171.6,338.0 174.9,338.1 178.3,338.1 181.6,338.2 185.0,338.2 188.3,338.2 191.7,338.2 195.1,338.2 198.4,338.2 201.8,338.1 205.1,338.1 208.5,338.0 211.8,338.0 215.2,337.9 218.6,337.9 221.9,337.8 225.3,337.7 228.6,337.7 232.0,337.6 235.3,337.5 238.7,337.4 242.0,337.3 245.4,337.3 248.8,337.2 252.1,337.1 255.5,337.0 258.8,336.9 262.2,336.8 265.5,336.7 268.9,336.6 272.2,336.5 275.6,336.4 278.9,336.2 282.3,336.1 285.7,336.0 289.0,335.9 292.4,335.8 295.7,335.7 299.1,335.6 302.4,335.5 305.8,335.4 309.1,335.3 312.5,335.3 315.8,335.3 319.2,335.3 322.6,335.3 325.9,335.4 329.3,335.6 332.6,335.8 335.9,336.1 339.3,336.4 342.6,336.9 345.9,337.4 349.2,337.9 352.5,338.6 355.7,339.3 359.0,340.1 362.2,341.0 365.4,341.9 368.6,343.0 371.8,344.1 374.9,345.3 378.0,346.6 381.0,347.9 384.1,349.3 387.1,350.8 390.0,352.4 392.9,354.1 395.7,355.8 398.5,357.6 401.3,359.5 404.0,361.4 406.7,363.3 409.4,365.3 412.1,367.2 414.8,369.2 417.6,371.1 420.3,373.0 423.1,374.9 426.0,376.6 428.8,378.4 431.7,380.0 434.7,381.7 437.6,383.3 440.6,384.9 443.5,386.5 446.5,388.0 449.5,389.5 452.5,391.0 455.5,392.5 458.5,393.9 461.6,395.3 464.6,396.7 467.7,398.0 470.8,399.3 473.9,400.6 477.0,401.9 480.1,403.1 483.2,404.3 486.3,405.5 489.5,406.7 492.6,408.0 495.7,409.1 498.9,410.3 502.0,411.6 505.1,412.8 508.2,414.2 511.2,415.6 512.8,417.9 515.6,419.7 518.6,421.2 521.6,422.6 524.7,424.0 527.7,425.4 530.8,426.7 533.9,428.0 537.0,429.3 540.1,430.6 543.2,431.8 546.3,433.0 549.4,434.2 552.6,435.4 555.7,436.5 558.9,437.6 562.1,438.7 565.2,439.7 568.4,440.8 571.6,441.9 574.8,442.9 578.0,443.9 581.2,444.9 584.4,445.9 587.6,446.9 590.8,447.8 594.0,448.7 597.2,449.6 600.5,450.5 603.7,451.5 606.9,452.4 610.1,453.4 613.3,454.4 616.5,455.4 619.7,456.5 622.8,457.7 625.9,458.9 628.9,460.3 631.9,461.7 634.8,463.3 637.7,465.0 640.5,466.8 643.2,468.8 645.8,470.8 648.3,473.0 650.7,475.2 653.1,477.6 655.3,480.1 657.5,482.6 659.6,485.2 661.6,487.9 663.5,490.6 665.3,493.4 667.1,496.2 668.8,499.1 670.5,502.0 672.1,505.0 673.6,507.9 675.2,510.9 676.7,513.9 678.2,516.9 679.7,519.9 681.3,522.9 682.8,525.8 684.3,528.8 685.8,531.8 687.4,534.8 689.0,537.7 690.6,540.7 692.2,543.6 693.8,546.6 695.3,549.5 696.9,552.5 698.5,555.5 700.1,558.4 701.7,561.4 703.2,564.3 704.8,567.3 706.4,570.3 708.0,573.2 709.7,576.1 711.4,579.0 713.2,581.8 715.0,584.6 716.8,587.4 718.7,590.2 720.6,592.9 722.5,595.6 724.5,598.3 726.5,601.0 728.6,603.7 730.6,606.3 732.7,609.0 734.8,611.6 737.0,614.1 739.2,616.6 741.5,619.0 743.8,621.4 746.3,623.7 748.8,625.9 750.0,627.0 751.2,628.2 752.5,629.2 753.8,630.3 762.0,636.1 762.0,636.4 753.8,630.6 752.5,629.5 751.2,628.5 749.9,627.4 748.7,626.2 746.2,624.0 743.8,621.7 741.4,619.4 739.1,616.9 736.9,614.4 734.8,611.9 732.7,609.3 730.6,606.7 728.5,604.0 726.5,601.4 724.5,598.7 722.5,596.0 720.5,593.3 718.6,590.5 716.7,587.8 714.9,585.0 713.1,582.2 711.3,579.3 709.6,576.5 707.9,573.6 706.3,570.6 704.7,567.7 703.1,564.7 701.5,561.8 699.9,558.8 698.3,555.9 696.8,552.9 695.2,550.0 693.6,547.0 692.0,544.1 690.4,541.1 688.8,538.2 687.2,535.2 685.6,532.2 684.1,529.3 682.6,526.3 681.1,523.3 679.5,520.3 678.0,517.3 676.5,514.3 675.0,511.3 673.4,508.4 671.9,505.4 670.3,502.5 668.6,499.6 666.9,496.7 665.1,493.9 663.3,491.1 661.3,488.4 659.3,485.7 657.2,483.1 655.0,480.6 652.8,478.1 650.5,475.8 648.0,473.5 645.5,471.3 642.9,469.3 640.2,467.4 637.4,465.6 634.5,463.9 631.6,462.3 628.6,460.9 625.6,459.5 622.5,458.3 619.3,457.1 616.2,456.0 613.0,455.0 609.8,454.0 606.6,453.1 603.4,452.1 600.1,451.2 596.9,450.3 593.7,449.4 590.4,448.5 587.2,447.6 584.0,446.6 580.8,445.7 577.6,444.7 574.4,443.7 571.2,442.7 568.0,441.6 564.9,440.5 561.7,439.5 558.5,438.4 555.4,437.3 552.2,436.1 549.1,435.0 545.9,433.8 542.8,432.6 539.7,431.3 536.6,430.1 533.5,428.8 530.4,427.5 527.4,426.2 524.3,424.8 521.3,423.4 518.2,422.0 515.2,420.5 512.4,418.8 510.7,416.6 507.7,415.1 504.6,413.8 501.5,412.6 498.4,411.3 495.2,410.1 492.1,408.9 489.0,407.7 485.9,406.5 482.7,405.2 479.6,404.0 476.5,402.8 473.4,401.5 470.3,400.2 467.2,398.9 464.2,397.6 461.1,396.2 458.1,394.8 455.1,393.3 452.1,391.8 449.1,390.3 446.1,388.8 443.1,387.2 440.2,385.7 437.2,384.1 434.3,382.4 431.4,380.8 428.5,379.1 425.6,377.4 422.8,375.6 420.0,373.7 417.2,371.8 414.5,369.9 411.8,367.9 409.1,365.9 406.4,364.0 403.7,362.0 401.0,360.1 398.2,358.3 395.4,356.5 392.6,354.7 389.7,353.0 386.8,351.4 383.8,349.9 380.8,348.5 377.7,347.2 374.6,345.9 371.5,344.7 368.4,343.6 365.2,342.5 362.0,341.5 358.8,340.7 355.5,339.9 352.2,339.1 349.0,338.5 345.7,337.9 342.3,337.4 339.0,337.0 335.7,336.6 332.4,336.3 329.0,336.1 325.7,336.0 322.3,335.9 319.0,335.8 315.6,335.8 312.3,335.8 308.9,335.9 305.6,335.9 302.2,336.0 298.8,336.1 295.5,336.2 292.1,336.3 288.8,336.4 285.4,336.5 282.1,336.6 278.7,336.7 275.4,336.8 272.0,336.9 268.7,337.0 265.3,337.1 262.0,337.2 258.6,337.3 255.3,337.4 251.9,337.5 248.5,337.6 245.2,337.7 241.8,337.8 238.5,337.9 235.1,337.9 231.8,338.0 228.4,338.1 225.1,338.1 221.7,338.2 218.4,338.3 215.0,338.3 211.6,338.4 208.3,338.4 204.9,338.5 201.6,338.5 198.2,338.5 194.9,338.6 191.5,338.6 188.2,338.6 184.8,338.6 181.4,338.5 178.1,338.5 174.7,338.4 171.4,338.4 168.0,338.3 164.7,338.2 161.3,338.1 158.0,338.0 154.6,337.9 151.3,337.8 147.9,337.7 144.5,337.5 141.2,337.4 137.8,337.2 134.5,337.0 131.1,336.8 127.8,336.6 124.5,336.3 121.1,336.0 117.8,335.6 114.5,335.2 111.2,334.8 107.8,334.2 104.5,333.7 101.2,333.1 98.0,332.4 96.3,332.1 94.7,331.8 93.0,331.4 91.4,331.1 81.6,328.9" fill="#24DD24" stroke="#24DD24" stroke-width="0.35"/>
<polygon points="81.6,328.9 91.4,331.1 93.0,331.4 94.7,331.8 96.3,332.1 98.0,332.4 101.2,333.1 104.5,333.7 107.8,334.2 111.2,334.8 114.5,335.2 117.8,335.6 121.1,336.0 124.5,336.3 127.8,336.6 131.1,336.8 134.5,337.0 137.8,337.2 141.2,337.4 144.5,337.5 147.9,337.7 151.3,337.8 154.6,337.9 158.0,338.0 161.3,338.1 164.7,338.2 168.0,338.3 171.4,338.4 174.7,338.4 178.1,338.5 181.4,338.5 184.8,338.6 188.2,338.6 191.5,338.6 194.9,338.6 198.2,338.5 201.6,338.5 204.9,338.5 208.3,338.4 211.6,338.4 215.0,338.3 218.4,338.3 221.7,338.2 225.1,338.1 228.4,338.1 231.8,338.0 235.1,337.9 238.5,337.9 241.8,337.8 245.2,337.7 248.5,337.6 251.9,337.5 255.3,337.4 258.6,337.3 262.0,337.2 265.3,337.1 268.7,337.0 272.0,336.9 275.4,336.8 278.7,336.7 282.1,336.6 285.4,336.5 288.8,336.4 292.1,336.3 295.5,336.2 298.8,336.1 302.2,336.0 305.6,335.9 308.9,335.9 312.3,335.8 315.6,335.8 319.0,335.8 322.3,335.9 325.7,336.0 329.0,336.1 332.4,336.3 335.7,336.6 339.0,337.0 342.3,337.4 345.7,337.9 349.0,338.5 352.2,339.1 355.5,339.9 358.8,340.7 362.0,341.5 365.2,342.5 368.4,343.6 371.5,344.7 374.6,345.9 377.7,347.2 380.8,348.5 383.8,349.9 386.8,351.4 389.7,353.0 392.6,354.7 395.4,356.5 398.2,358.3 401.0,360.1 403.7,362.0 406.4,364.0 409.1,365.9 411.8,367.9 414.5,369.9 417.2,371.8 420.0,373.7 422.8,375.6 425.6,377.4 428.5,379.1 431.4,380.8 434.3,382.4 437.2,384.1 440.2,385.7 443.1,387.2 446.1,388.8 449.1,390.3 452.1,391.8 455.1,393.3 458.1,394.8 461.1,396.2 464.2,397.6 467.2,398.9 470.3,400.2 473.4,401.5 476.5,402.8 479.6,404.0 482.7,405.2 485.9,406.5 489.0,407.7 492.1,408.9 495.2,410.1 498.4,411.3 501.5,412.6 504.6,413.8 507.7,415.1 510.7,416.6 512.4,418.8 515.2,420.5 518.2,422.0 521.3,423.4 524.3,424.8 527.4,426.2 530.4,427.5 533.5,428.8 536.6,430.1 539.7,431.3 542.8,432.6 545.9,433.8 549.1,435.0 552.2,436.1 555.4,437.3 558.5,438.4 561.7,439.5 564.9,440.5 568.0,441.6 571.2,442.7 574.4,443.7 577.6,444.7 580.8,445.7 584.0,446.6 587.2,447.6 590.4,448.5 593.7,449.4 596.9,450.3 600.1,451.2 603.4,452.1 606.6,453.1 609.8,454.0 613.0,455.0 616.2,456.0 619.3,457.1 622.5,458.3 625.6,459.5 628.6,460.9 631.6,462.3 634.5,463.9 637.4,465.6 640.2,467.4 642.9,469.3 645.5,471.3 648.0,473.5 650.5,475.8 652.8,478.1 655.0,480.6 657.2,483.1 659.3,485.7 661.3,488.4 663.3,491.1 665.1,493.9 666.9,496.7 668.6,499.6 670.3,502.5 671.9,505.4 673.4,508.4 675.0,511.3 676.5,514.3 678.0,517.3 679.5,520.3 681.1,523.3 682.6,526.3 684.1,529.3 685.6,532.2 687.2,535.2 688.8,538.2 690.4,541.1 692.0,544.1 693.6,547.0 695.2,550.0 696.8,552.9 698.3,555.9 699.9,558.8 701.5,561.8 703.1,564.7 704.7,567.7 706.3,570.6 707.9,573.6 709.6,576.5 711.3,579.3 713.1,582.2 714.9,585.0 716.7,587.8 718.6,590.5 720.5,593.3 722.5,596.0 724.5,598.7 726.5,601.4 728.5,604.0 730.6,606.7 732.7,609.3 734.8,611.9 736.9,614.4 739.1,616.9 741.4,619.4 743.8,621.7 746.2,624.0 748.7,626.2 749.9,627.4 751.2,628.5 752.5,629.5 753.8,630.6 762.0,636.4 761.9,636.7 753.7,630.9 752.4,629.8 751.1,628.8 749.9,627.7 748.7,626.5 746.2,624.3 743.7,622.0 741.4,619.7 739.1,617.3 736.9,614.8 734.7,612.2 732.6,609.6 730.5,607.0 728.5,604.4 726.4,601.7 724.4,599.0 722.4,596.3 720.5,593.6 718.5,590.9 716.7,588.1 714.8,585.3 713.0,582.5 711.2,579.7 709.5,576.8 707.8,573.9 706.2,571.0 704.6,568.1 703.0,565.1 701.4,562.2 699.8,559.2 698.2,556.3 696.6,553.3 695.0,550.4 693.4,547.4 691.8,544.5 690.2,541.5 688.6,538.6 687.0,535.6 685.5,532.7 683.9,529.7 682.4,526.7 680.9,523.7 679.4,520.7 677.8,517.7 676.3,514.8 674.8,511.8 673.2,508.8 671.7,505.9 670.1,502.9 668.4,500.0 666.7,497.1 664.9,494.3 663.0,491.6 661.1,488.8 659.1,486.2 657.0,483.6 654.8,481.1 652.5,478.6 650.2,476.3 647.7,474.0 645.2,471.9 642.6,469.9 639.9,467.9 637.1,466.2 634.2,464.5 631.3,462.9 628.3,461.4 625.2,460.1 622.1,458.9 619.0,457.7 615.8,456.6 612.6,455.6 609.4,454.6 606.2,453.7 603.0,452.8 599.8,451.9 596.6,451.0 593.3,450.1 590.1,449.2 586.9,448.3 583.7,447.4 580.4,446.4 577.2,445.4 574.0,444.4 570.9,443.4 567.7,442.4 564.5,441.3 561.3,440.2 558.2,439.2 555.0,438.1 551.9,436.9 548.7,435.7 545.6,434.6 542.5,433.4 539.4,432.1 536.2,430.9 533.1,429.6 530.1,428.3 527.0,427.0 523.9,425.6 520.9,424.3 517.8,422.9 514.8,421.4 512.0,419.7 510.2,417.5 507.2,416.1 504.1,414.8 501.0,413.5 497.9,412.3 494.8,411.0 491.6,409.9 488.5,408.6 485.4,407.4 482.3,406.2 479.1,404.9 476.0,403.7 472.9,402.4 469.9,401.1 466.8,399.8 463.7,398.4 460.7,397.0 457.7,395.6 454.7,394.1 451.7,392.6 448.7,391.1 445.7,389.6 442.7,388.0 439.8,386.4 436.8,384.8 433.9,383.2 431.0,381.5 428.1,379.8 425.3,378.1 422.4,376.3 419.7,374.4 416.9,372.6 414.2,370.6 411.5,368.6 408.8,366.6 406.1,364.7 403.4,362.7 400.7,360.8 397.9,358.9 395.1,357.1 392.3,355.4 389.4,353.7 386.5,352.1 383.5,350.5 380.5,349.1 377.4,347.8 374.4,346.5 371.2,345.3 368.1,344.1 364.9,343.1 361.7,342.1 358.5,341.2 355.3,340.4 352.0,339.7 348.7,339.0 345.4,338.5 342.1,338.0 338.8,337.5 335.5,337.2 332.1,336.9 328.8,336.7 325.4,336.5 322.1,336.4 318.7,336.3 315.4,336.3 312.0,336.4 308.7,336.4 305.3,336.5 302.0,336.5 298.6,336.6 295.3,336.7 291.9,336.8 288.6,336.9 285.2,337.0 281.9,337.1 278.5,337.2 275.2,337.3 271.8,337.4 268.5,337.5 265.1,337.6 261.7,337.7 258.4,337.8 255.0,337.9 251.7,338.0 248.3,338.1 245.0,338.1 241.6,338.2 238.3,338.3 234.9,338.4 231.6,338.4 228.2,338.5 224.9,338.6 221.5,338.6 218.2,338.7 214.8,338.7 211.4,338.8 208.1,338.8 204.7,338.9 201.4,338.9 198.0,338.9 194.7,338.9 191.3,338.9 188.0,338.9 184.6,338.9 181.3,338.9 177.9,338.8 174.5,338.8 171.2,338.7 167.8,338.7 164.5,338.6 161.1,338.5 157.8,338.4 154.4,338.3 151.1,338.1 147.7,338.0 144.4,337.9 141.0,337.7 137.7,337.6 134.3,337.4 131.0,337.2 127.6,337.0 124.3,336.7 121.0,336.3 117.6,336.0 114.3,335.6 111.0,335.1 107.7,334.6 104.4,334.0 101.1,333.4 97.8,332.8 96.1,332.5 94.5,332.1 92.8,331.8 91.2,331.5 81.4,329.3" fill="#22DA22" stroke="#22DA22" stroke-width="0.35"/>
<polygon points="81.4,329.3 91.2,331.5 92.8,331.8 94.5,332.1 96.1,332.5 97.8,332.8 101.1,333.4 104.4,334.0 107.7,334.6 111.0,335.1 114.3,335.6 117.6,336.0 121.0,336.3 124.3,336.7 127.6,337.0 131.0,337.2 134.3,337.4 137.7,337.6 141.0,337.7 144.4,337.9 147.7,338.0 151.1,338.1 154.4,338.3 157.8,338.4 161.1,338.5 164.5,338.6 167.8,338.7 171.2,338.7 174.5,338.8 177.9,338.8 181.3,338.9 184.6,338.9 188.0,338.9 191.3,338.9 194.7,338.9 198.0,338.9 201.4,338.9 204.7,338.9 208.1,338.8 211.4,338.8 214.8,338.7 218.2,338.7 221.5,338.6 224.9,338.6 228.2,338.5 231.6,338.4 234.9,338.4 238.3,338.3 241.6,338.2 245.0,338.1 248.3,338.1 251.7,338.0 255.0,337.9 258.4,337.8 261.7,337.7 265.1,337.6 268.5,337.5 271.8,337.4 275.2,337.3 278.5,337.2 281.9,337.1 285.2,337.0 288.6,336.9 291.9,336.8 295.3,336.7 298.6,336.6 302.0,336.5 305.3,336.5 308.7,336.4 312.0,336.4 315.4,336.3 318.7,336.3 322.1,336.4 325.4,336.5 328.8,336.7 332.1,336.9 335.5,337.2 338.8,337.5 342.1,338.0 345.4,338.5 348.7,339.0 352.0,339.7 355.3,340.4 358.5,341.2 361.7,342.1 364.9,343.1 368.1,344.1 371.2,345.3 374.4,346.5 377.4,347.8 380.5,349.1 383.5,350.5 386.5,352.1 389.4,353.7 392.3,355.4 395.1,357.1 397.9,358.9 400.7,360.8 403.4,362.7 406.1,364.7 408.8,366.6 411.5,368.6 414.2,370.6 416.9,372.6 419.7,374.4 422.4,376.3 425.3,378.1 428.1,379.8 431.0,381.5 433.9,383.2 436.8,384.8 439.8,386.4 442.7,388.0 445.7,389.6 448.7,391.1 451.7,392.6 454.7,394.1 457.7,395.6 460.7,397.0 463.7,398.4 466.8,399.8 469.9,401.1 472.9,402.4 476.0,403.7 479.1,404.9 482.3,406.2 485.4,407.4 488.5,408.6 491.6,409.9 494.8,411.0 497.9,412.3 501.0,413.5 504.1,414.8 507.2,416.1 510.2,417.5 512.0,419.7 514.8,421.4 517.8,422.9 520.9,424.3 523.9,425.6 527.0,427.0 530.1,428.3 533.1,429.6 536.2,430.9 539.4,432.1 542.5,433.4 545.6,434.6 548.7,435.7 551.9,436.9 555.0,438.1 558.2,439.2 561.3,440.2 564.5,441.3 567.7,442.4 570.9,443.4 574.0,444.4 577.2,445.4 580.4,446.4 583.7,447.4 586.9,448.3 590.1,449.2 593.3,450.1 596.6,451.0 599.8,451.9 603.0,452.8 606.2,453.7 609.4,454.6 612.6,455.6 615.8,456.6 619.0,457.7 622.1,458.9 625.2,460.1 628.3,461.4 631.3,462.9 634.2,464.5 637.1,466.2 639.9,467.9 642.6,469.9 645.2,471.9 647.7,474.0 650.2,476.3 652.5,478.6 654.8,481.1 657.0,483.6 659.1,486.2 661.1,488.8 663.0,491.6 664.9,494.3 666.7,497.1 668.4,500.0 670.1,502.9 671.7,505.9 673.2,508.8 674.8,511.8 676.3,514.8 677.8,517.7 679.4,520.7 680.9,523.7 682.4,526.7 683.9,529.7 685.5,532.7 687.0,535.6 688.6,538.6 690.2,541.5 691.8,544.5 693.4,547.4 695.0,550.4 696.6,553.3 698.2,556.3 699.8,559.2 701.4,562.2 703.0,565.1 704.6,568.1 706.2,571.0 707.8,573.9 709.5,576.8 711.2,579.7 713.0,582.5 714.8,585.3 716.7,588.1 718.5,590.9 720.5,593.6 722.4,596.3 724.4,599.0 726.4,601.7 728.5,604.4 730.5,607.0 732.6,609.6 734.7,612.2 736.9,614.8 739.1,617.3 741.4,619.7 743.7,622.0 746.2,624.3 748.7,626.5 749.9,627.7 751.1,628.8 752.4,629.8 753.7,630.9 761.9,636.7 761.9,637.0 753.7,631.2 752.4,630.1 751.1,629.1 749.8,628.0 748.6,626.8 746.1,624.6 743.7,622.4 741.3,620.0 739.0,617.6 736.8,615.1 734.6,612.5 732.5,610.0 730.4,607.3 728.4,604.7 726.3,602.0 724.3,599.4 722.3,596.7 720.4,593.9 718.5,591.2 716.6,588.4 714.7,585.7 712.9,582.9 711.1,580.0 709.4,577.2 707.7,574.3 706.1,571.4 704.5,568.4 702.8,565.5 701.2,562.6 699.6,559.6 698.0,556.7 696.4,553.7 694.8,550.8 693.2,547.8 691.6,544.9 690.0,542.0 688.4,539.0 686.8,536.1 685.3,533.1 683.7,530.1 682.2,527.1 680.7,524.2 679.2,521.2 677.6,518.2 676.1,515.2 674.6,512.2 673.0,509.3 671.5,506.3 669.8,503.4 668.2,500.5 666.5,497.6 664.6,494.8 662.8,492.0 660.8,489.3 658.8,486.7 656.7,484.1 654.5,481.6 652.2,479.2 649.9,476.8 647.4,474.6 644.9,472.4 642.3,470.4 639.5,468.5 636.7,466.7 633.9,465.0 630.9,463.5 627.9,462.0 624.9,460.7 621.8,459.5 618.7,458.3 615.5,457.3 612.3,456.2 609.1,455.3 605.9,454.3 602.7,453.4 599.4,452.5 596.2,451.6 593.0,450.8 589.7,449.9 586.5,449.0 583.3,448.1 580.1,447.2 576.9,446.2 573.7,445.2 570.5,444.2 567.3,443.1 564.1,442.1 561.0,441.0 557.8,439.9 554.6,438.8 551.5,437.7 548.4,436.5 545.2,435.3 542.1,434.1 539.0,432.9 535.9,431.7 532.8,430.4 529.7,429.1 526.6,427.8 523.6,426.5 520.5,425.1 517.5,423.7 514.4,422.2 511.6,420.6 509.7,418.5 506.7,417.1 503.6,415.8 500.5,414.5 497.4,413.2 494.3,412.0 491.1,410.8 488.0,409.6 484.9,408.3 481.8,407.1 478.7,405.9 475.6,404.6 472.5,403.3 469.4,402.0 466.3,400.6 463.3,399.3 460.3,397.9 457.2,396.4 454.2,395.0 451.2,393.5 448.3,391.9 445.3,390.4 442.3,388.8 439.4,387.2 436.5,385.6 433.5,383.9 430.6,382.3 427.8,380.6 424.9,378.8 422.1,377.0 419.3,375.2 416.6,373.3 413.9,371.3 411.2,369.3 408.5,367.3 405.8,365.3 403.1,363.4 400.4,361.5 397.6,359.6 394.8,357.8 392.0,356.0 389.1,354.3 386.2,352.7 383.2,351.2 380.2,349.7 377.2,348.4 374.1,347.1 371.0,345.9 367.8,344.7 364.7,343.7 361.5,342.7 358.3,341.8 355.0,341.0 351.8,340.3 348.5,339.6 345.2,339.0 341.9,338.5 338.6,338.1 335.2,337.7 331.9,337.4 328.6,337.2 325.2,337.0 321.9,336.9 318.5,336.9 315.2,336.9 311.8,336.9 308.5,336.9 305.1,337.0 301.8,337.1 298.4,337.2 295.1,337.3 291.7,337.3 288.4,337.4 285.0,337.5 281.6,337.6 278.3,337.7 274.9,337.8 271.6,337.9 268.2,338.0 264.9,338.1 261.5,338.2 258.2,338.3 254.8,338.3 251.5,338.4 248.1,338.5 244.8,338.6 241.4,338.6 238.1,338.7 234.7,338.8 231.4,338.8 228.0,338.9 224.7,339.0 221.3,339.0 218.0,339.1 214.6,339.1 211.2,339.2 207.9,339.2 204.5,339.2 201.2,339.3 197.8,339.3 194.5,339.3 191.1,339.3 187.8,339.3 184.4,339.3 181.1,339.2 177.7,339.2 174.4,339.2 171.0,339.1 167.7,339.0 164.3,338.9 160.9,338.8 157.6,338.7 154.2,338.6 150.9,338.5 147.5,338.3 144.2,338.2 140.8,338.1 137.5,337.9 134.1,337.7 130.8,337.5 127.4,337.3 124.1,337.0 120.8,336.7 117.5,336.3 114.1,335.9 110.8,335.4 107.5,334.9 104.2,334.4 100.9,333.8 97.6,333.1 96.0,332.8 94.3,332.5 92.7,332.2 91.0,331.8 81.2,329.8" fill="#20D320" stroke="#20D320" stroke-width="0.35"/>
<polygon points="81.2,329.8 91.0,331.8 92.7,332.2 94.3,332.5 96.0,332.8 97.6,333.1 100.9,333.8 104.2,334.4 107.5,334.9 110.8,335.4 114.1,335.9 117.5,336.3 120.8,336.7 124.1,337.0 127.4,337.3 130.8,337.5 134.1,337.7 137.5,337.9 140.8,338.1 144.2,338.2 147.5,338.3 150.9,338.5 154.2,338.6 157.6,338.7 160.9,338.8 164.3,338.9 167.7,339.0 171.0,339.1 174.4,339.2 177.7,339.2 181.1,339.2 184.4,339.3 187.8,339.3 191.1,339.3 194.5,339.3 197.8,339.3 201.2,339.3 204.5,339.2 207.9,339.2 211.2,339.2 214.6,339.1 218.0,339.1 221.3,339.0 224.7,339.0 228.0,338.9 231.4,338.8 234.7,338.8 238.1,338.7 241.4,338.6 244.8,338.6 248.1,338.5 251.5,338.4 254.8,338.3 258.2,338.3 261.5,338.2 264.9,338.1 268.2,338.0 271.6,337.9 274.9,337.8 278.3,337.7 281.6,337.6 285.0,337.5 288.4,337.4 291.7,337.3 295.1,337.3 298.4,337.2 301.8,337.1 305.1,337.0 308.5,336.9 311.8,336.9 315.2,336.9 318.5,336.9 321.9,336.9 325.2,337.0 328.6,337.2 331.9,337.4 335.2,337.7 338.6,338.1 341.9,338.5 345.2,339.0 348.5,339.6 351.8,340.3 355.0,341.0 358.3,341.8 361.5,342.7 364.7,343.7 367.8,344.7 371.0,345.9 374.1,347.1 377.2,348.4 380.2,349.7 383.2,351.2 386.2,352.7 389.1,354.3 392.0,356.0 394.8,357.8 397.6,359.6 400.4,361.5 403.1,363.4 405.8,365.3 408.5,367.3 411.2,369.3 413.9,371.3 416.6,373.3 419.3,375.2 422.1,377.0 424.9,378.8 427.8,380.6 430.6,382.3 433.5,383.9 436.5,385.6 439.4,387.2 442.3,388.8 445.3,390.4 448.3,391.9 451.2,393.5 454.2,395.0 457.2,396.4 460.3,397.9 463.3,399.3 466.3,400.6 469.4,402.0 472.5,403.3 475.6,404.6 478.7,405.9 481.8,407.1 484.9,408.3 488.0,409.6 491.1,410.8 494.3,412.0 497.4,413.2 500.5,414.5 503.6,415.8 506.7,417.1 509.7,418.5 511.6,420.6 514.4,422.2 517.5,423.7 520.5,425.1 523.6,426.5 526.6,427.8 529.7,429.1 532.8,430.4 535.9,431.7 539.0,432.9 542.1,434.1 545.2,435.3 548.4,436.5 551.5,437.7 554.6,438.8 557.8,439.9 561.0,441.0 564.1,442.1 567.3,443.1 570.5,444.2 573.7,445.2 576.9,446.2 580.1,447.2 583.3,448.1 586.5,449.0 589.7,449.9 593.0,450.8 596.2,451.6 599.4,452.5 602.7,453.4 605.9,454.3 609.1,455.3 612.3,456.2 615.5,457.3 618.7,458.3 621.8,459.5 624.9,460.7 627.9,462.0 630.9,463.5 633.9,465.0 636.7,466.7 639.5,468.5 642.3,470.4 644.9,472.4 647.4,474.6 649.9,476.8 652.2,479.2 654.5,481.6 656.7,484.1 658.8,486.7 660.8,489.3 662.8,492.0 664.6,494.8 666.5,497.6 668.2,500.5 669.8,503.4 671.5,506.3 673.0,509.3 674.6,512.2 676.1,515.2 677.6,518.2 679.2,521.2 680.7,524.2 682.2,527.1 683.7,530.1 685.3,533.1 686.8,536.1 688.4,539.0 690.0,542.0 691.6,544.9 693.2,547.8 694.8,550.8 696.4,553.7 698.0,556.7 699.6,559.6 701.2,562.6 702.8,565.5 704.5,568.4 706.1,571.4 707.7,574.3 709.4,577.2 711.1,580.0 712.9,582.9 714.7,585.7 716.6,588.4 718.5,591.2 720.4,593.9 722.3,596.7 724.3,599.4 726.3,602.0 728.4,604.7 730.4,607.3 732.5,610.0 734.6,612.5 736.8,615.1 739.0,617.6 741.3,620.0 743.7,622.4 746.1,624.6 748.6,626.8 749.8,628.0 751.1,629.1 752.4,630.1 753.7,631.2 761.9,637.0 761.9,637.2 753.6,631.5 752.3,630.4 751.0,629.4 749.8,628.3 748.6,627.1 746.1,624.9 743.6,622.7 741.3,620.3 739.0,617.9 736.7,615.4 734.6,612.9 732.5,610.3 730.4,607.7 728.3,605.0 726.3,602.4 724.3,599.7 722.3,597.0 720.3,594.3 718.4,591.5 716.5,588.8 714.7,586.0 712.8,583.2 711.0,580.4 709.3,577.5 707.6,574.7 706.0,571.7 704.3,568.8 702.7,565.9 701.1,563.0 699.5,560.0 697.9,557.1 696.3,554.1 694.6,551.2 693.0,548.3 691.4,545.3 689.8,542.4 688.2,539.4 686.6,536.5 685.1,533.5 683.5,530.6 682.0,527.6 680.5,524.6 679.0,521.6 677.4,518.6 675.9,515.6 674.4,512.7 672.8,509.7 671.2,506.7 669.6,503.8 668.0,500.9 666.2,498.1 664.4,495.3 662.5,492.5 660.6,489.8 658.5,487.2 656.4,484.6 654.2,482.1 651.9,479.7 649.6,477.3 647.1,475.1 644.6,473.0 641.9,471.0 639.2,469.1 636.4,467.3 633.5,465.6 630.6,464.1 627.6,462.6 624.6,461.3 621.5,460.1 618.3,458.9 615.2,457.9 612.0,456.9 608.8,455.9 605.6,455.0 602.3,454.1 599.1,453.2 595.9,452.3 592.6,451.4 589.4,450.6 586.2,449.7 582.9,448.8 579.7,447.9 576.5,446.9 573.3,446.0 570.1,445.0 567.0,443.9 563.8,442.9 560.6,441.8 557.4,440.7 554.3,439.6 551.1,438.5 548.0,437.3 544.9,436.1 541.8,434.9 538.6,433.7 535.5,432.5 532.4,431.2 529.3,429.9 526.3,428.6 523.2,427.3 520.1,425.9 517.1,424.6 514.1,423.1 511.2,421.5 509.2,419.4 506.2,418.0 503.1,416.7 500.0,415.5 496.9,414.2 493.8,413.0 490.6,411.8 487.5,410.5 484.4,409.3 481.3,408.0 478.2,406.8 475.1,405.5 472.0,404.2 468.9,402.9 465.9,401.5 462.9,400.1 459.8,398.7 456.8,397.3 453.8,395.8 450.8,394.3 447.9,392.7 444.9,391.2 441.9,389.6 439.0,388.0 436.1,386.3 433.2,384.7 430.3,383.0 427.4,381.3 424.6,379.5 421.7,377.7 419.0,375.9 416.2,374.0 413.5,372.0 410.8,370.0 408.2,368.0 405.5,366.0 402.8,364.1 400.0,362.1 397.3,360.3 394.5,358.4 391.7,356.6 388.9,354.9 385.9,353.3 383.0,351.8 380.0,350.4 376.9,349.0 373.8,347.7 370.7,346.5 367.6,345.3 364.4,344.3 361.2,343.3 358.0,342.4 354.8,341.6 351.5,340.8 348.2,340.2 344.9,339.6 341.6,339.1 338.3,338.6 335.0,338.3 331.7,338.0 328.3,337.7 325.0,337.6 321.6,337.5 318.3,337.4 314.9,337.4 311.6,337.4 308.2,337.5 304.9,337.5 301.5,337.6 298.2,337.7 294.8,337.8 291.5,337.9 288.1,338.0 284.8,338.0 281.4,338.1 278.1,338.2 274.7,338.3 271.4,338.4 268.0,338.5 264.7,338.6 261.3,338.6 258.0,338.7 254.6,338.8 251.3,338.9 247.9,338.9 244.6,339.0 241.2,339.1 237.9,339.1 234.5,339.2 231.2,339.3 227.8,339.3 224.5,339.4 221.1,339.4 217.8,339.5 214.4,339.5 211.0,339.6 207.7,339.6 204.3,339.6 201.0,339.7 197.6,339.7 194.3,339.7 190.9,339.7 187.6,339.7 184.2,339.6 180.9,339.6 177.5,339.6 174.2,339.5 170.8,339.4 167.5,339.4 164.1,339.3 160.8,339.2 157.4,339.1 154.1,338.9 150.7,338.8 147.4,338.7 144.0,338.6 140.7,338.4 137.3,338.3 134.0,338.1 130.6,337.9 127.3,337.6 123.9,337.3 120.6,337.0 117.3,336.6 114.0,336.2 110.6,335.8 107.3,335.3 104.0,334.7 100.7,334.1 97.4,333.5 95.8,333.2 94.2,332.9 92.5,332.5 90.9,332.2 81.0,330.2" fill="#1DBD1D" stroke="#1DBD1D" stroke-width="0.35"/>
<polygon points="81.0,330.2 90.9,332.2 92.5,332.5 94.2,332.9 95.8,333.2 97.4,333.5 100.7,334.1 104.0,334.7 107.3,335.3 110.6,335.8 114.0,336.2 117.3,336.6 120.6,337.0 123.9,337.3 127.3,337.6 130.6,337.9 134.0,338.1 137.3,338.3 140.7,338.4 144.0,338.6 147.4,338.7 150.7,338.8 154.1,338.9 157.4,339.1 160.8,339.2 164.1,339.3 167.5,339.4 170.8,339.4 174.2,339.5 177.5,339.6 180.9,339.6 184.2,339.6 187.6,339.7 190.9,339.7 194.3,339.7 197.6,339.7 201.0,339.7 204.3,339.6 207.7,339.6 211.0,339.6 214.4,339.5 217.8,339.5 221.1,339.4 224.5,339.4 227.8,339.3 231.2,339.3 234.5,339.2 237.9,339.1 241.2,339.1 244.6,339.0 247.9,338.9 251.3,338.9 254.6,338.8 258.0,338.7 261.3,338.6 264.7,338.6 268.0,338.5 271.4,338.4 274.7,338.3 278.1,338.2 281.4,338.1 284.8,338.0 288.1,338.0 291.5,337.9 294.8,337.8 298.2,337.7 301.5,337.6 304.9,337.5 308.2,337.5 311.6,337.4 314.9,337.4 318.3,337.4 321.6,337.5 325.0,337.6 328.3,337.7 331.7,338.0 335.0,338.3 338.3,338.6 341.6,339.1 344.9,339.6 348.2,340.2 351.5,340.8 354.8,341.6 358.0,342.4 361.2,343.3 364.4,344.3 367.6,345.3 370.7,346.5 373.8,347.7 376.9,349.0 380.0,350.4 383.0,351.8 385.9,353.3 388.9,354.9 391.7,356.6 394.5,358.4 397.3,360.3 400.0,362.1 402.8,364.1 405.5,366.0 408.2,368.0 410.8,370.0 413.5,372.0 416.2,374.0 419.0,375.9 421.7,377.7 424.6,379.5 427.4,381.3 430.3,383.0 433.2,384.7 436.1,386.3 439.0,388.0 441.9,389.6 444.9,391.2 447.9,392.7 450.8,394.3 453.8,395.8 456.8,397.3 459.8,398.7 462.9,400.1 465.9,401.5 468.9,402.9 472.0,404.2 475.1,405.5 478.2,406.8 481.3,408.0 484.4,409.3 487.5,410.5 490.6,411.8 493.8,413.0 496.9,414.2 500.0,415.5 503.1,416.7 506.2,418.0 509.2,419.4 511.2,421.5 514.1,423.1 517.1,424.6 520.1,425.9 523.2,427.3 526.3,428.6 529.3,429.9 532.4,431.2 535.5,432.5 538.6,433.7 541.8,434.9 544.9,436.1 548.0,437.3 551.1,438.5 554.3,439.6 557.4,440.7 560.6,441.8 563.8,442.9 567.0,443.9 570.1,445.0 573.3,446.0 576.5,446.9 579.7,447.9 582.9,448.8 586.2,449.7 589.4,450.6 592.6,451.4 595.9,452.3 599.1,453.2 602.3,454.1 605.6,455.0 608.8,455.9 612.0,456.9 615.2,457.9 618.3,458.9 621.5,460.1 624.6,461.3 627.6,462.6 630.6,464.1 633.5,465.6 636.4,467.3 639.2,469.1 641.9,471.0 644.6,473.0 647.1,475.1 649.6,477.3 651.9,479.7 654.2,482.1 656.4,484.6 658.5,487.2 660.6,489.8 662.5,492.5 664.4,495.3 666.2,498.1 668.0,500.9 669.6,503.8 671.2,506.7 672.8,509.7 674.4,512.7 675.9,515.6 677.4,518.6 679.0,521.6 680.5,524.6 682.0,527.6 683.5,530.6 685.1,533.5 686.6,536.5 688.2,539.4 689.8,542.4 691.4,545.3 693.0,548.3 694.6,551.2 696.3,554.1 697.9,557.1 699.5,560.0 701.1,563.0 702.7,565.9 704.3,568.8 706.0,571.7 707.6,574.7 709.3,577.5 711.0,580.4 712.8,583.2 714.7,586.0 716.5,588.8 718.4,591.5 720.3,594.3 722.3,597.0 724.3,599.7 726.3,602.4 728.3,605.0 730.4,607.7 732.5,610.3 734.6,612.9 736.7,615.4 739.0,617.9 741.3,620.3 743.6,622.7 746.1,624.9 748.6,627.1 749.8,628.3 751.0,629.4 752.3,630.4 753.6,631.5 761.9,637.2 761.8,637.5 753.6,631.8 752.3,630.8 751.0,629.7 749.7,628.6 748.5,627.4 746.0,625.3 743.6,623.0 741.2,620.6 738.9,618.2 736.7,615.7 734.5,613.2 732.4,610.6 730.3,608.0 728.2,605.4 726.2,602.7 724.2,600.0 722.2,597.3 720.3,594.6 718.3,591.9 716.4,589.1 714.6,586.4 712.8,583.6 711.0,580.7 709.2,577.9 707.5,575.0 705.8,572.1 704.2,569.2 702.6,566.3 700.9,563.3 699.3,560.4 697.7,557.5 696.1,554.6 694.5,551.6 692.9,548.7 691.3,545.7 689.6,542.8 688.0,539.9 686.4,536.9 684.9,534.0 683.3,531.0 681.8,528.0 680.3,525.0 678.8,522.0 677.2,519.1 675.7,516.1 674.2,513.1 672.6,510.1 671.0,507.2 669.4,504.3 667.7,501.4 666.0,498.5 664.2,495.7 662.3,493.0 660.3,490.3 658.3,487.7 656.2,485.1 654.0,482.6 651.7,480.2 649.3,477.9 646.8,475.6 644.3,473.5 641.6,471.5 638.9,469.6 636.1,467.9 633.2,466.2 630.3,464.7 627.3,463.2 624.2,461.9 621.1,460.7 618.0,459.5 614.8,458.5 611.6,457.5 608.4,456.5 605.2,455.6 602.0,454.7 598.8,453.8 595.5,453.0 592.3,452.1 589.0,451.3 585.8,450.4 582.6,449.5 579.4,448.6 576.2,447.7 573.0,446.7 569.8,445.7 566.6,444.7 563.4,443.6 560.2,442.6 557.1,441.5 553.9,440.4 550.8,439.2 547.6,438.1 544.5,436.9 541.4,435.7 538.3,434.5 535.2,433.3 532.1,432.0 529.0,430.7 525.9,429.4 522.8,428.1 519.7,426.8 516.7,425.4 513.7,424.0 510.8,422.4 508.7,420.4 505.7,419.0 502.6,417.7 499.5,416.4 496.4,415.2 493.3,413.9 490.1,412.7 487.0,411.5 483.9,410.2 480.8,409.0 477.7,407.7 474.6,406.4 471.6,405.1 468.5,403.8 465.4,402.4 462.4,401.0 459.4,399.6 456.4,398.1 453.4,396.6 450.4,395.1 447.5,393.5 444.5,392.0 441.6,390.4 438.6,388.7 435.7,387.1 432.8,385.5 429.9,383.8 427.0,382.0 424.2,380.3 421.4,378.5 418.6,376.6 415.9,374.7 413.2,372.7 410.5,370.7 407.8,368.7 405.2,366.7 402.5,364.7 399.7,362.8 397.0,360.9 394.2,359.1 391.4,357.3 388.6,355.6 385.7,353.9 382.7,352.4 379.7,351.0 376.6,349.6 373.6,348.3 370.5,347.1 367.3,345.9 364.2,344.8 361.0,343.9 357.8,343.0 354.5,342.1 351.3,341.4 348.0,340.7 344.7,340.1 341.4,339.6 338.1,339.2 334.8,338.8 331.4,338.5 328.1,338.3 324.8,338.1 321.4,338.0 318.1,337.9 314.7,337.9 311.4,337.9 308.0,338.0 304.7,338.0 301.3,338.1 298.0,338.2 294.6,338.3 291.3,338.4 287.9,338.5 284.6,338.6 281.2,338.6 277.9,338.7 274.5,338.8 271.2,338.9 267.8,339.0 264.5,339.0 261.1,339.1 257.8,339.2 254.4,339.3 251.1,339.3 247.7,339.4 244.4,339.5 241.0,339.5 237.7,339.6 234.3,339.6 231.0,339.7 227.6,339.7 224.3,339.8 220.9,339.8 217.5,339.9 214.2,339.9 210.8,340.0 207.5,340.0 204.1,340.0 200.8,340.0 197.4,340.0 194.1,340.0 190.7,340.0 187.4,340.0 184.0,340.0 180.7,340.0 177.3,339.9 174.0,339.9 170.6,339.8 167.3,339.7 163.9,339.6 160.6,339.5 157.2,339.4 153.9,339.3 150.5,339.2 147.2,339.0 143.8,338.9 140.5,338.8 137.1,338.6 133.8,338.4 130.4,338.2 127.1,338.0 123.8,337.7 120.4,337.4 117.1,337.0 113.8,336.6 110.5,336.1 107.2,335.6 103.9,335.0 100.6,334.5 97.3,333.8 95.6,333.5 94.0,333.2 92.3,332.9 90.7,332.6 80.9,330.6" fill="#1AA91A" stroke="#1AA91A" stroke-width="0.35"/>
<polygon points="80.9,330.6 90.7,332.6 92.3,332.9 94.0,333.2 95.6,333.5 97.3,333.8 100.6,334.5 103.9,335.0 107.2,335.6 110.5,336.1 113.8,336.6 117.1,337.0 120.4,337.4 123.8,337.7 127.1,338.0 130.4,338.2 133.8,338.4 137.1,338.6 140.5,338.8 143.8,338.9 147.2,339.0 150.5,339.2 153.9,339.3 157.2,339.4 160.6,339.5 163.9,339.6 167.3,339.7 170.6,339.8 174.0,339.9 177.3,339.9 180.7,340.0 184.0,340.0 187.4,340.0 190.7,340.0 194.1,340.0 197.4,340.0 200.8,340.0 204.1,340.0 207.5,340.0 210.8,340.0 214.2,339.9 217.5,339.9 220.9,339.8 224.3,339.8 227.6,339.7 231.0,339.7 234.3,339.6 237.7,339.6 241.0,339.5 244.4,339.5 247.7,339.4 251.1,339.3 254.4,339.3 257.8,339.2 261.1,339.1 264.5,339.0 267.8,339.0 271.2,338.9 274.5,338.8 277.9,338.7 281.2,338.6 284.6,338.6 287.9,338.5 291.3,338.4 294.6,338.3 298.0,338.2 301.3,338.1 304.7,338.0 308.0,338.0 311.4,337.9 314.7,337.9 318.1,337.9 321.4,338.0 324.8,338.1 328.1,338.3 331.4,338.5 334.8,338.8 338.1,339.2 341.4,339.6 344.7,340.1 348.0,340.7 351.3,341.4 354.5,342.1 357.8,343.0 361.0,343.9 364.2,344.8 367.3,345.9 370.5,347.1 373.6,348.3 376.6,349.6 379.7,351.0 382.7,352.4 385.7,353.9 388.6,355.6 391.4,357.3 394.2,359.1 397.0,360.9 399.7,362.8 402.5,364.7 405.2,366.7 407.8,368.7 410.5,370.7 413.2,372.7 415.9,374.7 418.6,376.6 421.4,378.5 424.2,380.3 427.0,382.0 429.9,383.8 432.8,385.5 435.7,387.1 438.6,388.7 441.6,390.4 444.5,392.0 447.5,393.5 450.4,395.1 453.4,396.6 456.4,398.1 459.4,399.6 462.4,401.0 465.4,402.4 468.5,403.8 471.6,405.1 474.6,406.4 477.7,407.7 480.8,409.0 483.9,410.2 487.0,411.5 490.1,412.7 493.3,413.9 496.4,415.2 499.5,416.4 502.6,417.7 505.7,419.0 508.7,420.4 510.8,422.4 513.7,424.0 516.7,425.4 519.7,426.8 522.8,428.1 525.9,429.4 529.0,430.7 532.1,432.0 535.2,433.3 538.3,434.5 541.4,435.7 544.5,436.9 547.6,438.1 550.8,439.2 553.9,440.4 557.1,441.5 560.2,442.6 563.4,443.6 566.6,444.7 569.8,445.7 573.0,446.7 576.2,447.7 579.4,448.6 582.6,449.5 585.8,450.4 589.0,451.3 592.3,452.1 595.5,453.0 598.8,453.8 602.0,454.7 605.2,455.6 608.4,456.5 611.6,457.5 614.8,458.5 618.0,459.5 621.1,460.7 624.2,461.9 627.3,463.2 630.3,464.7 633.2,466.2 636.1,467.9 638.9,469.6 641.6,471.5 644.3,473.5 646.8,475.6 649.3,477.9 651.7,480.2 654.0,482.6 656.2,485.1 658.3,487.7 660.3,490.3 662.3,493.0 664.2,495.7 666.0,498.5 667.7,501.4 669.4,504.3 671.0,507.2 672.6,510.1 674.2,513.1 675.7,516.1 677.2,519.1 678.8,522.0 680.3,525.0 681.8,528.0 683.3,531.0 684.9,534.0 686.4,536.9 688.0,539.9 689.6,542.8 691.3,545.7 692.9,548.7 694.5,551.6 696.1,554.6 697.7,557.5 699.3,560.4 700.9,563.3 702.6,566.3 704.2,569.2 705.8,572.1 707.5,575.0 709.2,577.9 711.0,580.7 712.8,583.6 714.6,586.4 716.4,589.1 718.3,591.9 720.3,594.6 722.2,597.3 724.2,600.0 726.2,602.7 728.2,605.4 730.3,608.0 732.4,610.6 734.5,613.2 736.7,615.7 738.9,618.2 741.2,620.6 743.6,623.0 746.0,625.3 748.5,627.4 749.7,628.6 751.0,629.7 752.3,630.8 753.6,631.8 761.8,637.5 761.8,637.8 753.5,632.1 752.2,631.1 750.9,630.0 749.7,628.9 748.5,627.8 745.9,625.6 743.5,623.3 741.1,621.0 738.8,618.6 736.6,616.1 734.4,613.5 732.3,611.0 730.2,608.3 728.2,605.7 726.1,603.0 724.1,600.4 722.1,597.7 720.2,595.0 718.3,592.2 716.4,589.5 714.5,586.7 712.7,583.9 710.9,581.1 709.1,578.3 707.4,575.4 705.7,572.5 704.1,569.6 702.4,566.7 700.8,563.7 699.2,560.8 697.5,557.9 695.9,555.0 694.3,552.0 692.7,549.1 691.1,546.2 689.4,543.2 687.8,540.3 686.2,537.3 684.7,534.4 683.1,531.4 681.6,528.4 680.1,525.5 678.6,522.5 677.1,519.5 675.5,516.5 674.0,513.5 672.4,510.6 670.8,507.6 669.2,504.7 667.5,501.8 665.8,499.0 663.9,496.2 662.1,493.5 660.1,490.8 658.0,488.1 655.9,485.6 653.7,483.1 651.4,480.7 649.0,478.4 646.5,476.2 644.0,474.1 641.3,472.1 638.6,470.2 635.8,468.4 632.9,466.8 630.0,465.2 627.0,463.8 623.9,462.5 620.8,461.3 617.7,460.2 614.5,459.1 611.3,458.1 608.1,457.2 604.9,456.2 601.6,455.4 598.4,454.5 595.2,453.6 591.9,452.8 588.7,452.0 585.5,451.1 582.2,450.3 579.0,449.4 575.8,448.4 572.6,447.5 569.4,446.5 566.2,445.5 563.1,444.4 559.9,443.4 556.7,442.3 553.6,441.2 550.4,440.0 547.3,438.9 544.2,437.7 541.0,436.5 537.9,435.3 534.8,434.0 531.7,432.8 528.6,431.5 525.5,430.3 522.4,428.9 519.4,427.6 516.3,426.2 513.3,424.8 510.3,423.3 508.2,421.4 505.2,420.0 502.1,418.7 499.0,417.4 495.9,416.1 492.8,414.9 489.7,413.7 486.6,412.4 483.5,411.2 480.4,409.9 477.3,408.6 474.2,407.3 471.1,406.0 468.0,404.6 465.0,403.3 462.0,401.8 459.0,400.4 456.0,398.9 453.0,397.4 450.0,395.9 447.0,394.3 444.1,392.7 441.2,391.1 438.2,389.5 435.3,387.9 432.4,386.2 429.5,384.5 426.7,382.8 423.8,381.0 421.0,379.2 418.3,377.3 415.5,375.4 412.9,373.4 410.2,371.4 407.5,369.4 404.8,367.4 402.2,365.4 399.4,363.5 396.7,361.6 393.9,359.7 391.1,357.9 388.3,356.2 385.4,354.6 382.4,353.0 379.4,351.6 376.4,350.2 373.3,348.9 370.2,347.7 367.1,346.5 363.9,345.4 360.7,344.4 357.5,343.5 354.3,342.7 351.0,342.0 347.8,341.3 344.5,340.7 341.2,340.2 337.9,339.7 334.5,339.3 331.2,339.0 327.9,338.8 324.5,338.6 321.2,338.5 317.8,338.5 314.5,338.5 311.1,338.5 307.8,338.5 304.4,338.6 301.1,338.6 297.7,338.7 294.4,338.8 291.0,338.9 287.7,339.0 284.3,339.1 281.0,339.1 277.6,339.2 274.3,339.3 270.9,339.4 267.6,339.4 264.3,339.5 260.9,339.6 257.6,339.6 254.2,339.7 250.9,339.8 247.5,339.8 244.2,339.9 240.8,340.0 237.5,340.0 234.1,340.1 230.8,340.1 227.4,340.2 224.1,340.2 220.7,340.3 217.3,340.3 214.0,340.3 210.6,340.4 207.3,340.4 203.9,340.4 200.6,340.4 197.2,340.4 193.9,340.4 190.5,340.4 187.2,340.4 183.8,340.4 180.5,340.3 177.1,340.3 173.8,340.2 170.4,340.1 167.1,340.1 163.7,340.0 160.4,339.9 157.0,339.8 153.7,339.6 150.3,339.5 147.0,339.4 143.7,339.2 140.3,339.1 137.0,338.9 133.6,338.8 130.3,338.6 126.9,338.3 123.6,338.0 120.3,337.7 116.9,337.3 113.6,336.9 110.3,336.4 107.0,335.9 103.7,335.4 100.4,334.8 97.1,334.2 95.5,333.9 93.8,333.6 92.2,333.3 90.5,333.0 80.7,331.0" fill="#189B18" stroke="#189B18" stroke-width="0.35"/>
<defs><linearGradient id="lf" gradientUnits="userSpaceOnUse" x1="290" y1="0" x2="370" y2="0"><stop offset="0" stop-color="#1FCB1F" stop-opacity="1"/><stop offset="1" stop-color="#1FCB1F" stop-opacity="0"/></linearGradient></defs>
<polygon points="81.4,329.3 91.2,331.5 92.8,331.8 94.5,332.1 96.1,332.5 97.8,332.8 101.1,333.4 104.4,334.0 107.7,334.6 111.0,335.1 114.3,335.6 117.6,336.0 121.0,336.3 124.3,336.7 127.6,337.0 131.0,337.2 134.3,337.4 137.7,337.6 141.0,337.7 144.4,337.9 147.7,338.0 151.1,338.1 154.4,338.3 157.8,338.4 161.1,338.5 164.5,338.6 167.8,338.7 171.2,338.7 174.5,338.8 177.9,338.8 181.3,338.9 184.6,338.9 188.0,338.9 191.3,338.9 194.7,338.9 198.0,338.9 201.4,338.9 204.7,338.9 208.1,338.8 211.4,338.8 214.8,338.7 218.2,338.7 221.5,338.6 224.9,338.6 228.2,338.5 231.6,338.4 234.9,338.4 238.3,338.3 241.6,338.2 245.0,338.1 248.3,338.1 251.7,338.0 255.0,337.9 258.4,337.8 261.7,337.7 265.1,337.6 268.5,337.5 271.8,337.4 275.2,337.3 278.5,337.2 281.9,337.1 285.2,337.0 288.6,336.9 291.9,336.8 295.3,336.7 298.6,336.6 302.0,336.5 305.3,336.5 308.7,336.4 312.0,336.4 315.4,336.3 318.7,336.3 322.1,336.4 325.4,336.5 328.8,336.7 332.1,336.9 335.5,337.2 338.8,337.5 342.1,338.0 345.4,338.5 348.7,339.0 352.0,339.7 355.3,340.4 358.5,341.2 361.7,342.1 364.9,343.1 368.1,344.1 371.2,345.3 374.4,346.5 370.5,355.3 367.5,354.0 364.4,352.8 361.3,351.7 358.1,350.6 354.9,349.7 351.7,348.8 348.5,348.0 345.2,347.2 341.9,346.6 338.7,346.0 335.4,345.6 332.1,345.1 328.7,344.8 325.4,344.6 322.1,344.4 318.8,344.2 315.4,344.1 312.1,344.1 308.8,344.1 305.4,344.1 302.1,344.2 298.7,344.2 295.4,344.3 292.1,344.3 288.7,344.4 285.4,344.4 282.0,344.5 278.7,344.5 275.3,344.5 272.0,344.5 268.7,344.5 265.3,344.5 262.0,344.5 258.6,344.6 255.3,344.6 252.0,344.6 248.6,344.6 245.3,344.6 241.9,344.6 238.6,344.6 235.3,344.6 231.9,344.6 228.6,344.6 225.2,344.6 221.9,344.6 218.6,344.6 215.2,344.6 211.9,344.6 208.5,344.6 205.2,344.6 201.9,344.5 198.5,344.5 195.2,344.5 191.8,344.4 188.5,344.3 185.1,344.3 181.8,344.2 178.5,344.1 175.1,344.0 171.8,344.0 168.5,343.9 165.1,343.8 161.8,343.7 158.4,343.5 155.1,343.4 151.8,343.3 148.4,343.2 145.1,343.1 141.7,342.9 138.4,342.8 135.1,342.6 131.7,342.4 128.4,342.2 125.1,341.9 121.8,341.6 118.4,341.3 115.1,340.9 111.8,340.5 108.5,340.0 105.2,339.6 101.9,339.1 98.6,338.5 95.3,338.0 93.7,337.7 92.0,337.4 90.4,337.2 88.7,336.9 78.8,335.4" fill="url(#lf)"/>
<polyline points="78.8,335.4 88.7,336.9 90.4,337.2 92.0,337.4 93.7,337.7 95.3,338.0 98.6,338.5 101.9,339.1 105.2,339.6 108.5,340.0 111.8,340.5 115.1,340.9 118.4,341.3 121.8,341.6 125.1,341.9 128.4,342.2 131.7,342.4 135.1,342.6 138.4,342.8 141.7,342.9 145.1,343.1 148.4,343.2 151.8,343.3 155.1,343.4 158.4,343.5 161.8,343.7 165.1,343.8 168.5,343.9 171.8,344.0 175.1,344.0 178.5,344.1 181.8,344.2 185.1,344.3 188.5,344.3 191.8,344.4 195.2,344.5 198.5,344.5 201.9,344.5 205.2,344.6 208.5,344.6 211.9,344.6 215.2,344.6 218.6,344.6 221.9,344.6 225.2,344.6 228.6,344.6 231.9,344.6 235.3,344.6 238.6,344.6 241.9,344.6 245.3,344.6 248.6,344.6 252.0,344.6 255.3,344.6 258.6,344.6 262.0,344.5 265.3,344.5 268.7,344.5 272.0,344.5 275.3,344.5 278.7,344.5 282.0,344.5 285.4,344.4 288.7,344.4 292.1,344.3 295.4,344.3 298.7,344.2 302.1,344.2 305.4,344.1 308.8,344.1 312.1,344.1 315.4,344.1 318.8,344.2 322.1,344.4 325.4,344.6 328.7,344.8 332.1,345.1 335.4,345.6 338.7,346.0 341.9,346.6 345.2,347.2 348.5,348.0 351.7,348.8 354.9,349.7 358.1,350.6 361.3,351.7 364.4,352.8 367.5,354.0 370.5,355.3 373.6,356.7 376.6,358.2 379.5,359.7 382.4,361.3 385.3,363.0 388.1,364.8 390.8,366.6 393.6,368.6 396.2,370.5 398.9,372.5 401.5,374.6 404.1,376.7 406.7,378.7 409.3,380.8 411.9,382.9 414.6,384.9 417.3,386.8 420.0,388.8 422.8,390.6 425.6,392.4 428.4,394.2 431.2,396.0 434.1,397.7 437.0,399.5 439.8,401.2 442.7,402.9 445.6,404.5 448.5,406.2 451.4,407.8 454.3,409.4 457.3,411.0 460.2,412.6 463.2,414.1 466.2,415.5 469.2,417.0 472.2,418.4 475.3,419.8 478.3,421.1 481.4,422.5 484.4,423.8 487.5,425.1 490.6,426.4 493.7,427.7 496.8,429.0 499.8,430.3 502.9,431.5 506.0,432.8 509.1,434.0 512.2,435.3 515.4,436.5 518.5,437.7 521.6,438.9 524.7,440.1 527.8,441.3 531.0,442.4 534.1,443.6 537.2,444.8 540.3,446.0 543.5,447.1 546.6,448.3 549.7,449.5 552.9,450.6 556.0,451.7 559.2,452.8 562.3,453.8 565.5,454.7 568.7,455.6 572.0,456.4 575.2,457.2 578.4,458.0 581.7,458.7 585.0,459.4 588.2,460.1 591.5,460.8 594.8,461.5 598.0,462.3 601.3,463.0 604.5,463.9 607.7,464.8 610.9,465.7 614.1,466.7 617.2,467.7 620.4,468.9 623.4,470.1 626.5,471.5 629.5,472.9 632.4,474.5 635.2,476.2 638.0,477.9 640.7,479.8 643.4,481.9 645.9,484.0 648.4,486.2 650.8,488.5 653.1,490.9 655.3,493.4 657.4,495.9 659.5,498.5 661.5,501.2 663.4,503.9 665.2,506.7 666.9,509.5 668.6,512.4 670.3,515.3 671.9,518.2 673.4,521.2 675.0,524.1 676.5,527.1 678.0,530.1 679.5,533.1 681.0,536.0 682.6,539.0 684.2,541.9 685.8,544.9 687.4,547.8 689.1,550.7 690.7,553.6 692.4,556.5 694.1,559.3 695.8,562.2 697.6,565.1 699.3,567.9 701.0,570.8 702.8,573.6 704.5,576.5 706.3,579.3 708.1,582.1 709.9,584.9 711.8,587.7 713.7,590.4 715.6,593.2 717.5,595.9 719.5,598.6 721.4,601.3 723.4,604.0 725.4,606.6 727.5,609.3 729.5,611.9 731.6,614.5 733.8,617.1 735.9,619.6 738.2,622.0 740.5,624.4 742.9,626.7 745.4,628.9 747.9,631.1 749.1,632.2 750.4,633.2 751.7,634.3 753.0,635.3 761.4,640.8" fill="none" stroke="#0C4C0C" stroke-width="0.9" stroke-opacity="0.7"/>
<polygon points="478.5,391.7 481.6,392.8 484.8,393.9 488.0,395.0 491.1,396.2 494.3,397.3 497.5,398.4 500.7,399.5 503.8,400.7 507.0,401.9 510.1,403.1 513.2,404.5 507.6,415.3 504.5,414.0 501.4,412.7 498.3,411.5 495.2,410.3 492.0,409.1 488.9,407.9 485.8,406.7 482.6,405.4 479.5,404.2 476.4,403.0 473.3,401.7" fill="#34EA34" fill-opacity="0.55"/>
<polygon points="543.7,422.7 546.8,424.0 549.9,425.2 553.0,426.4 556.2,427.6 559.3,428.7 562.5,429.8 565.7,430.8 568.9,431.9 572.1,433.1 575.2,434.2 578.4,435.3 581.6,436.5 584.7,437.6 587.9,438.7 591.1,439.8 594.3,440.9 590.4,448.6 587.2,447.7 583.9,446.8 580.7,445.8 577.5,444.8 574.3,443.8 571.2,442.8 568.0,441.7 564.8,440.7 561.6,439.6 558.5,438.5 555.3,437.4 552.1,436.3 549.0,435.1 545.9,433.9 542.8,432.7 539.6,431.5" fill="#2EE62E" fill-opacity="0.45"/>
<path d="M43.6 306 C43 301 47 300 50 302 C54 306 58 313 62.5 318 L61.6 322.9 C56 323 50 321 46.5 317 C44 314 43.8 310 43.6 306Z" fill="#1BC01B"/>
<path d="M45 302.5 C48 301 51 302.5 53.5 306 L60 315.5 L57 314 C53 309 49 304 45 302.5Z" fill="#30F030"/>
<path d="M784 651.8 C786 645 792 643 800 643.5 C805 644 807.5 648 806.8 653 C806 658 802 661 797 660 C791 659 787 655 784 651.8Z" fill="#18B418"/>
<path d="M788 646 C792 643.5 800 643 804 645.5 C806 647 806.8 650 806.6 652 C803 648 796 646 788 646Z" fill="#2EE82E"/>
<polygon points="64.7,317.4 83.5,324.4 78.8,335.4 65.5,328.3" fill="#1CC81C"/>
<line x1="64.7" y1="317.4" x2="65.5" y2="328.3" stroke="#0C600C" stroke-width="0.9" stroke-dasharray="1.5 1.2"/>
<line x1="67.8" y1="318.6" x2="67.7" y2="329.5" stroke="#0C600C" stroke-width="0.9" stroke-dasharray="1.5 1.2"/>
<line x1="71.0" y1="319.7" x2="69.9" y2="330.7" stroke="#0C600C" stroke-width="0.9" stroke-dasharray="1.5 1.2"/>
<line x1="74.1" y1="320.9" x2="72.2" y2="331.9" stroke="#0C600C" stroke-width="0.9" stroke-dasharray="1.5 1.2"/>
<line x1="77.2" y1="322.1" x2="74.4" y2="333.0" stroke="#0C600C" stroke-width="0.9" stroke-dasharray="1.5 1.2"/>
<line x1="80.4" y1="323.2" x2="76.6" y2="334.2" stroke="#0C600C" stroke-width="0.9" stroke-dasharray="1.5 1.2"/>
<line x1="83.5" y1="324.4" x2="78.8" y2="335.4" stroke="#0C600C" stroke-width="0.9" stroke-dasharray="1.5 1.2"/>
<polygon points="762.4,633.3 783.3,644.1 780,651.8 761.4,645.2" fill="#1CC81C"/>
<line x1="762.4" y1="633.3" x2="761.4" y2="645.2" stroke="#0C600C" stroke-width="0.9"/>
<line x1="765.4" y1="634.8" x2="764.1" y2="646.1" stroke="#0C600C" stroke-width="0.9"/>
<line x1="768.4" y1="636.4" x2="766.7" y2="647.1" stroke="#0C600C" stroke-width="0.9"/>
<line x1="771.4" y1="637.9" x2="769.4" y2="648.0" stroke="#0C600C" stroke-width="0.9"/>
<line x1="774.3" y1="639.5" x2="772.0" y2="649.0" stroke="#0C600C" stroke-width="0.9"/>
<line x1="777.3" y1="641.0" x2="774.7" y2="649.9" stroke="#0C600C" stroke-width="0.9"/>
<line x1="780.3" y1="642.6" x2="777.3" y2="650.9" stroke="#0C600C" stroke-width="0.9"/>
<line x1="783.3" y1="644.1" x2="780.0" y2="651.8" stroke="#0C600C" stroke-width="0.9"/>
<line x1="90" y1="333.3" x2="760" y2="638.1" stroke="#12E812" stroke-width="1.9"/>
</g>
<line x1="596" y1="106" x2="596" y2="921.47" stroke="#0000ff" stroke-width="2"/>
</svg>
<div class="btn" style="left:6px;width:68px"></div>
<div class="btn" style="left:76px;width:71px"></div>
<div class="btn" style="left:149px;width:85px"></div>
<div class="btn" style="left:236px;width:79px"></div>
<div class="btn" style="left:317px;width:22px"></div>
<div class="btn" style="left:341px;width:22px"></div>
<div class="btn" style="left:365px;width:22px"></div>
<div class="btn" style="left:389px;width:22px"></div>
<div class="btn" style="left:413px;width:22px"></div>
<div class="btn" style="left:437px;width:74px"></div>
<div class="btn" style="left:513px;width:60px"></div>
<div class="btn" style="left:575px;width:66px"></div>
<div class="btn" style="left:643px;width:114px"></div>
<div class="btn" style="left:759px;width:88px"></div>
<div class="t" style="left:34px;top:30.2px;">Add...</div>
<div class="t" style="left:103.5px;top:30.2px;">Delete</div>
<div class="t" style="left:176px;top:30.2px;">Delete All</div>
<div class="t" style="left:263px;top:30.2px;">Arrange</div>
<div class="t" style="left:464px;top:30.2px;">Scale...</div>
<div class="t" style="left:540px;top:30.2px;">Split</div>
<div class="t" style="left:601.5px;top:30.2px;">Cut...</div>
<div class="t" style="left:670px;top:30.2px;">Layer heights...</div>
<div class="t" style="left:786px;top:30.2px;">Settings...</div>
<svg class="a" style="left:8px;top:27px" width="17" height="16" viewBox="0 0 17 16"><g stroke="#9A9A9A" stroke-width="1" fill="#FBFBFB">
<path d="M1.5 5.5 L8 2.5 L14.5 5.5 L14.5 11.5 L8 14.5 L1.5 11.5 Z"/>
<path d="M1.5 5.5 L8 8.5 L14.5 5.5 M8 8.5 L8 14.5" fill="none"/>
<ellipse cx="5" cy="4.5" rx="2" ry="1.1"/><ellipse cx="11" cy="4.5" rx="2" ry="1.1"/><ellipse cx="8" cy="3" rx="2" ry="1.1"/>
</g><circle cx="12.5" cy="12.5" r="3.6" fill="#3FA33F" stroke="#1E7F1E" stroke-width="0.8"/><path d="M12.5 10.3v4.4M10.3 12.5h4.4" stroke="#fff" stroke-width="1.5"/></svg>
<svg class="a" style="left:78px;top:27px" width="17" height="16" viewBox="0 0 17 16"><g stroke="#9A9A9A" stroke-width="1" fill="#FBFBFB">
<path d="M1.5 5.5 L8 2.5 L14.5 5.5 L14.5 11.5 L8 14.5 L1.5 11.5 Z"/>
<path d="M1.5 5.5 L8 8.5 L14.5 5.5 M8 8.5 L8 14.5" fill="none"/>
<ellipse cx="5" cy="4.5" rx="2" ry="1.1"/><ellipse cx="11" cy="4.5" rx="2" ry="1.1"/><ellipse cx="8" cy="3" rx="2" ry="1.1"/>
</g><circle cx="12.5" cy="12.5" r="3.6" fill="#F07A1A" stroke="#C85A10" stroke-width="0.8"/><path d="M10.3 12.5h4.4" stroke="#fff" stroke-width="1.5"/></svg>
<svg class="a" style="left:152px;top:28px" width="15" height="15" viewBox="0 0 15 15"><path d="M2.5 2.5 L12 12 M12 2.5 L2.5 12" stroke="#EE3A3F" stroke-width="3.4" stroke-linecap="round"/></svg>
<svg class="a" style="left:238px;top:27px" width="17" height="17" viewBox="0 0 17 17"><rect x="0.5" y="5.5" width="6.5" height="8" rx="1.5" fill="#8CC88C" stroke="#3C9A3C"/><rect x="6.5" y="8" width="9" height="8" rx="2" fill="#8AB4E0" stroke="#3A6EA8"/><rect x="4" y="1.5" width="8.5" height="8" rx="2" fill="#F06A6A" stroke="#D03030"/></svg>
<svg class="a" style="left:320px;top:27px" width="16" height="16" viewBox="0 0 16 16"><circle cx="8" cy="8" r="6.6" fill="#6CC56C" stroke="#3A9A3A" stroke-width="1"/><circle cx="8" cy="8" r="5" fill="none" stroke="#A8E6A8" stroke-width="0.8"/><path d="M8 4.6v6.8M4.6 8h6.8" stroke="#fff" stroke-width="2"/></svg>
<svg class="a" style="left:344px;top:27px" width="16" height="16" viewBox="0 0 16 16"><circle cx="8" cy="8" r="6.6" fill="#EE6A6A" stroke="#C83A3A" stroke-width="1"/><circle cx="8" cy="8" r="5" fill="none" stroke="#F8B0B0" stroke-width="0.8"/><path d="M4.6 8h6.8" stroke="#fff" stroke-width="2"/></svg>
<svg class="a" style="left:368px;top:27px" width="16" height="16" viewBox="0 0 16 16"><path d="M12.8 6.8 A5 5 0 1 0 9.2 12.9" fill="none" stroke="#3E983E" stroke-width="4"/><path d="M12.8 6.8 A5 5 0 1 0 9.2 12.9" fill="none" stroke="#8ACB8A" stroke-width="2.3"/><path d="M7.2 10.2 L12.6 10.8 L9 15.2 Z" fill="#3E983E"/></svg>
<svg class="a" style="left:392px;top:27px" width="16" height="16" viewBox="0 0 16 16"><path d="M3.2 6.8 A5 5 0 1 1 6.8 12.9" fill="none" stroke="#3E983E" stroke-width="4"/><path d="M3.2 6.8 A5 5 0 1 1 6.8 12.9" fill="none" stroke="#8ACB8A" stroke-width="2.3"/><path d="M8.8 10.2 L3.4 10.8 L7 15.2 Z" fill="#3E983E"/></svg>
<svg class="a" style="left:416px;top:27px" width="17" height="17" viewBox="0 0 17 17"><path d="M1.5 2 L10.5 2 L4 10.5 Z" fill="#10D010"/><path d="M10.5 2 L4 10.5" stroke="#E01010" stroke-width="1.3"/><path d="M9.5 5 L13 5 L13 10" stroke="#D02020" stroke-width="1.2" fill="none"/><path d="M11 9.5 L13 12.5 L15 9.5 Z" fill="#D01010"/><ellipse cx="8.5" cy="13.8" rx="7" ry="1.4" fill="#5A9EE0"/></svg>
<svg class="a" style="left:439px;top:27px" width="17" height="17" viewBox="0 0 17 17"><g fill="#45A845" stroke="#2E8A2E" stroke-width="0.5"><path transform="translate(0.5,0.5)" d="M0 0h5.5l-1.8 1.8 2.6 2.6-1.9 1.9-2.6-2.6L0 5.5z"/><path transform="translate(16.5,0.5) scale(-1,1)" d="M0 0h5.5l-1.8 1.8 2.6 2.6-1.9 1.9-2.6-2.6L0 5.5z"/><path transform="translate(0.5,16.5) scale(1,-1)" d="M0 0h5.5l-1.8 1.8 2.6 2.6-1.9 1.9-2.6-2.6L0 5.5z"/><path transform="translate(16.5,16.5) scale(-1,-1)" d="M0 0h5.5l-1.8 1.8 2.6 2.6-1.9 1.9-2.6-2.6L0 5.5z"/></g></svg>
<svg class="a" style="left:515px;top:27px" width="16" height="16" viewBox="0 0 16 16"><rect x="3" y="3" width="10" height="10" fill="#8FB0EE"/><g fill="#222"><rect x="1.5" y="1.5" width="3" height="3" rx="1.2"/><rect x="11.5" y="1.5" width="3" height="3" rx="1.2"/><rect x="1.5" y="11.5" width="3" height="3" rx="1.2"/><rect x="11.5" y="11.5" width="3" height="3" rx="1.2"/><rect x="6.5" y="1.5" width="3" height="3" rx="1.2" fill="#555"/><rect x="1.5" y="6.5" width="3" height="3" rx="1.2" fill="#555"/></g><rect x="2.5" y="2.5" width="1" height="1" fill="#fff"/></svg>
<svg class="a" style="left:577px;top:27px" width="16" height="16" viewBox="0 0 16 16"><path d="M8 1 L15 4.5 L15 11.5 L8 15 L1 11.5 L1 4.5 Z" fill="#F3D27A" stroke="#C8962E"/><path d="M1 4.5 L8 8 L15 4.5 M8 8 L8 15" fill="none" stroke="#D8A840"/><path d="M5 3 L12 6.5" stroke="#FFF0C0" stroke-width="1.5"/></svg>
<svg class="a" style="left:647px;top:30px" width="12" height="12" viewBox="0 0 12 12"><rect x="0" y="0" width="12" height="1.1" fill="#222"/><rect x="0" y="2" width="12" height="1.1" fill="#222"/><rect x="0" y="4" width="12" height="1.1" fill="#222"/><rect x="0" y="6" width="12" height="1.1" fill="#222"/><rect x="0" y="8" width="12" height="1.1" fill="#222"/><rect x="0" y="10" width="12" height="1.1" fill="#222"/></svg>
<svg class="a" style="left:761px;top:27px" width="17" height="17" viewBox="0 0 17 17"><polygon points="13.99,7.41 16.40,7.25 16.40,9.75 13.99,9.59 13.16,11.61 14.97,13.20 13.20,14.97 11.61,13.16 9.59,13.99 9.75,16.40 7.25,16.40 7.41,13.99 5.39,13.16 3.80,14.97 2.03,13.20 3.84,11.61 3.01,9.59 0.60,9.75 0.60,7.25 3.01,7.41 3.84,5.39 2.03,3.80 3.80,2.03 5.39,3.84 7.41,3.01 7.25,0.60 9.75,0.60 9.59,3.01 11.61,3.84 13.20,2.03 14.97,3.80 13.16,5.39" fill="#D0D0D0" stroke="#7E7E7E" stroke-width="0.9" stroke-linejoin="round"/><circle cx="8.5" cy="8.5" r="2.2" fill="#F4F4F4" stroke="#9A9A9A" stroke-width="0.8"/></svg>
<div class="t" style="left:921.5px;top:64.2px;">Print settings:</div>
<div class="t" style="left:944.5px;top:89.2px;">Filament:</div>
<div class="t" style="left:952.5px;top:114.2px;">Printer:</div>
<div class="cmb" style="left:995px;top:57px;width:256px"></div>
<div class="dd" style="left:1234px;top:59px;height:20px"></div>
<svg class="a" style="left:1236px;top:65px" width="11" height="8" viewBox="0 0 11 8"><path d="M2 1.5 L5.5 5 L9 1.5" fill="none" stroke="#33456A" stroke-width="2.2"/></svg>
<svg class="a" style="left:1255px;top:60px" width="18" height="18" viewBox="0 0 18 18"><polygon points="14.49,7.91 16.90,7.75 16.90,10.25 14.49,10.09 13.66,12.11 15.47,13.70 13.70,15.47 12.11,13.66 10.09,14.49 10.25,16.90 7.75,16.90 7.91,14.49 5.89,13.66 4.30,15.47 2.53,13.70 4.34,12.11 3.51,10.09 1.10,10.25 1.10,7.75 3.51,7.91 4.34,5.89 2.53,4.30 4.30,2.53 5.89,4.34 7.91,3.51 7.75,1.10 10.25,1.10 10.09,3.51 12.11,4.34 13.70,2.53 15.47,4.30 13.66,5.89" fill="#D0D0D0" stroke="#7E7E7E" stroke-width="0.9" stroke-linejoin="round"/><circle cx="9" cy="9" r="2.2" fill="#F4F4F4" stroke="#9A9A9A" stroke-width="0.8"/></svg>
<div class="cmb" style="left:995px;top:82px;width:256px"></div>
<div class="dd" style="left:1234px;top:84px;height:20px"></div>
<svg class="a" style="left:1236px;top:90px" width="11" height="8" viewBox="0 0 11 8"><path d="M2 1.5 L5.5 5 L9 1.5" fill="none" stroke="#33456A" stroke-width="2.2"/></svg>
<svg class="a" style="left:1255px;top:85px" width="18" height="18" viewBox="0 0 18 18"><polygon points="14.49,7.91 16.90,7.75 16.90,10.25 14.49,10.09 13.66,12.11 15.47,13.70 13.70,15.47 12.11,13.66 10.09,14.49 10.25,16.90 7.75,16.90 7.91,14.49 5.89,13.66 4.30,15.47 2.53,13.70 4.34,12.11 3.51,10.09 1.10,10.25 1.10,7.75 3.51,7.91 4.34,5.89 2.53,4.30 4.30,2.53 5.89,4.34 7.91,3.51 7.75,1.10 10.25,1.10 10.09,3.51 12.11,4.34 13.70,2.53 15.47,4.30 13.66,5.89" fill="#D0D0D0" stroke="#7E7E7E" stroke-width="0.9" stroke-linejoin="round"/><circle cx="9" cy="9" r="2.2" fill="#F4F4F4" stroke="#9A9A9A" stroke-width="0.8"/></svg>
<div class="cmb" style="left:995px;top:107px;width:256px"></div>
<div class="dd" style="left:1234px;top:109px;height:20px"></div>
<svg class="a" style="left:1236px;top:115px" width="11" height="8" viewBox="0 0 11 8"><path d="M2 1.5 L5.5 5 L9 1.5" fill="none" stroke="#33456A" stroke-width="2.2"/></svg>
<svg class="a" style="left:1255px;top:110px" width="18" height="18" viewBox="0 0 18 18"><polygon points="14.49,7.91 16.90,7.75 16.90,10.25 14.49,10.09 13.66,12.11 15.47,13.70 13.70,15.47 12.11,13.66 10.09,14.49 10.25,16.90 7.75,16.90 7.91,14.49 5.89,13.66 4.30,15.47 2.53,13.70 4.34,12.11 3.51,10.09 1.10,10.25 1.10,7.75 3.51,7.91 4.34,5.89 2.53,4.30 4.30,2.53 5.89,4.34 7.91,3.51 7.75,1.10 10.25,1.10 10.09,3.51 12.11,4.34 13.70,2.53 15.47,4.30 13.66,5.89" fill="#D0D0D0" stroke="#7E7E7E" stroke-width="0.9" stroke-linejoin="round"/><circle cx="9" cy="9" r="2.2" fill="#F4F4F4" stroke="#9A9A9A" stroke-width="0.8"/></svg>
<svg class="a" style="left:1001px;top:60px" width="18" height="18" viewBox="0 0 18 18"><polygon points="14.30,7.95 16.70,7.78 16.70,10.22 14.30,10.05 13.49,12.00 15.31,13.58 13.58,15.31 12.00,13.49 10.05,14.30 10.22,16.70 7.78,16.70 7.95,14.30 6.00,13.49 4.42,15.31 2.69,13.58 4.51,12.00 3.70,10.05 1.30,10.22 1.30,7.78 3.70,7.95 4.51,6.00 2.69,4.42 4.42,2.69 6.00,4.51 7.95,3.70 7.78,1.30 10.22,1.30 10.05,3.70 12.00,4.51 13.58,2.69 15.31,4.42 13.49,6.00" fill="#D0D0D0" stroke="#7E7E7E" stroke-width="0.9" stroke-linejoin="round"/><circle cx="9" cy="9" r="2.2" fill="#F4F4F4" stroke="#9A9A9A" stroke-width="0.8"/></svg>
<div class="t" style="left:1022.5px;top:64.2px;">- default -</div>
<div class="t" style="left:1022.5px;top:89.2px;">My Settings</div>
<div class="t" style="left:1022.5px;top:114.2px;">My Settings</div>
<svg class="a" style="left:1001px;top:110px" width="18" height="17" viewBox="0 0 18 17"><rect x="1.5" y="5.5" width="15" height="9" rx="2" fill="#D8D8D8" stroke="#6A6A6A"/><rect x="4.5" y="2.5" width="9" height="4" fill="#F4F4F4" stroke="#7A7A7A"/><rect x="3.5" y="10" width="11" height="2.5" fill="#555"/></svg>
<div class="btn" style="left:1050px;top:132px;width:101px;height:28px"></div>
<div class="btn" style="left:1153px;top:132px;width:118px;height:28px"></div>
<svg class="a" style="left:1052px;top:137px" width="17" height="17" viewBox="0 0 17 17"><g transform="translate(0,-1)"><g stroke="#9A9A9A" stroke-width="1" fill="#FBFBFB">
<path d="M1.5 5.5 L8 2.5 L14.5 5.5 L14.5 11.5 L8 14.5 L1.5 11.5 Z"/>
<path d="M1.5 5.5 L8 8.5 L14.5 5.5 M8 8.5 L8 14.5" fill="none"/>
<ellipse cx="5" cy="4.5" rx="2" ry="1.1"/><ellipse cx="11" cy="4.5" rx="2" ry="1.1"/><ellipse cx="8" cy="3" rx="2" ry="1.1"/>
</g></g><path d="M7 9.5 h4 v-3 l5 4.5 -5 4.5 v-3 h-4 z" fill="#58B058" stroke="#2E8A2E" stroke-width="0.8"/></svg>
<svg class="a" style="left:1155px;top:137px" width="17" height="17" viewBox="0 0 17 17"><polygon points="13.10,6.99 15.51,6.81 15.51,9.19 13.10,9.01 12.32,10.89 14.15,12.47 12.47,14.15 10.89,12.32 9.01,13.10 9.19,15.51 6.81,15.51 6.99,13.10 5.11,12.32 3.53,14.15 1.85,12.47 3.68,10.89 2.90,9.01 0.49,9.19 0.49,6.81 2.90,6.99 3.68,5.11 1.85,3.53 3.53,1.85 5.11,3.68 6.99,2.90 6.81,0.49 9.19,0.49 9.01,2.90 10.89,3.68 12.47,1.85 14.15,3.53 12.32,5.11" fill="#D0D0D0" stroke="#7E7E7E" stroke-width="0.9" stroke-linejoin="round"/><circle cx="8" cy="8" r="2.2" fill="#F4F4F4" stroke="#9A9A9A" stroke-width="0.8"/><path d="M7 9.5 h4 v-3 l5 4.5 -5 4.5 v-3 h-4 z" fill="#58B058" stroke="#2E8A2E" stroke-width="0.8"/></svg>
<div class="t" style="left:1067.5px;top:141.2px;">Export STL...</div>
<div class="t" style="left:1170px;top:141.2px;">Export G-code...</div>
<div class="gb" style="left:922px;top:172px;width:350px;height:53px"></div>
<div class="gt" style="left:928px;top:167.7px">Support material</div>
<div class="t" style="left:932.5px;top:189.7px;">Generate support</div>
<div class="t" style="left:932.5px;top:202.7px;">material:</div>
<div class="a" style="left:1249px;top:195px;width:13px;height:13px;border:1px solid #1C5180;background:linear-gradient(135deg,#DCDCD7,#FFFFFF)"></div>
<svg class="a" style="left:1251px;top:197px" width="9" height="9" viewBox="0 0 9 9"><path d="M1 4 L3.5 6.5 L8 1.5" fill="none" stroke="#21A121" stroke-width="2"/></svg>
<div class="gb" style="left:922px;top:763px;width:350px;height:120px"></div>
<div class="gt" style="left:928.5px;top:758.5px">Info</div>
<div class="t" style="left:926.5px;top:778.7px;">Object:</div>
<div class="cmb" style="left:963px;top:774px;width:304px;height:21px"></div>
<div class="dd" style="left:1250px;top:776px;height:17px"></div>
<svg class="a" style="left:1252px;top:780px" width="11" height="8" viewBox="0 0 11 8"><path d="M2 1.5 L5.5 5 L9 1.5" fill="none" stroke="#33456A" stroke-width="2.2"/></svg>
<div class="t" style="left:966.5px;top:778.7px;">Bow.stl</div>
<div class="t" style="left:926.5px;top:802.0px;">Copies:</div>
<div class="t" style="left:979.5px;top:802.0px;">1</div>
<div class="t" style="left:1066.5px;top:802.0px;">Size:</div>
<div class="t" style="left:1115.5px;top:802.0px;">31.00 x 184.82 x 6.46</div>
<div class="t" style="left:926.5px;top:821.1px;">Volume:</div>
<div class="t" style="left:979.5px;top:821.1px;">1551.95</div>
<div class="t" style="left:1066.5px;top:821.1px;">Facets:</div>
<div class="t" style="left:1115.5px;top:821.1px;">706150 (8 shells)</div>
<div class="t" style="left:926.5px;top:839.5px;">Materials:</div>
<div class="t" style="left:979.5px;top:839.5px;">1</div>
<div class="t" style="left:1066.5px;top:839.5px;">Manifold:</div>
<div class="t" style="left:1115.5px;top:839.5px;">Yes</div>
<div class="t" style="left:12px;top:842.7px;">3D</div>
<div class="tab2" style="left:50px;width:41px"></div>
<div class="tab2" style="left:91px;width:50px"></div>
<div class="tab2" style="left:141px;width:44px"></div>
<div class="t" style="left:54.5px;top:840.7px;">2D</div>
<div class="t" style="left:96px;top:840.7px;">Preview</div>
<div class="t" style="left:146px;top:840.7px;">Layers</div>
</body></html>
